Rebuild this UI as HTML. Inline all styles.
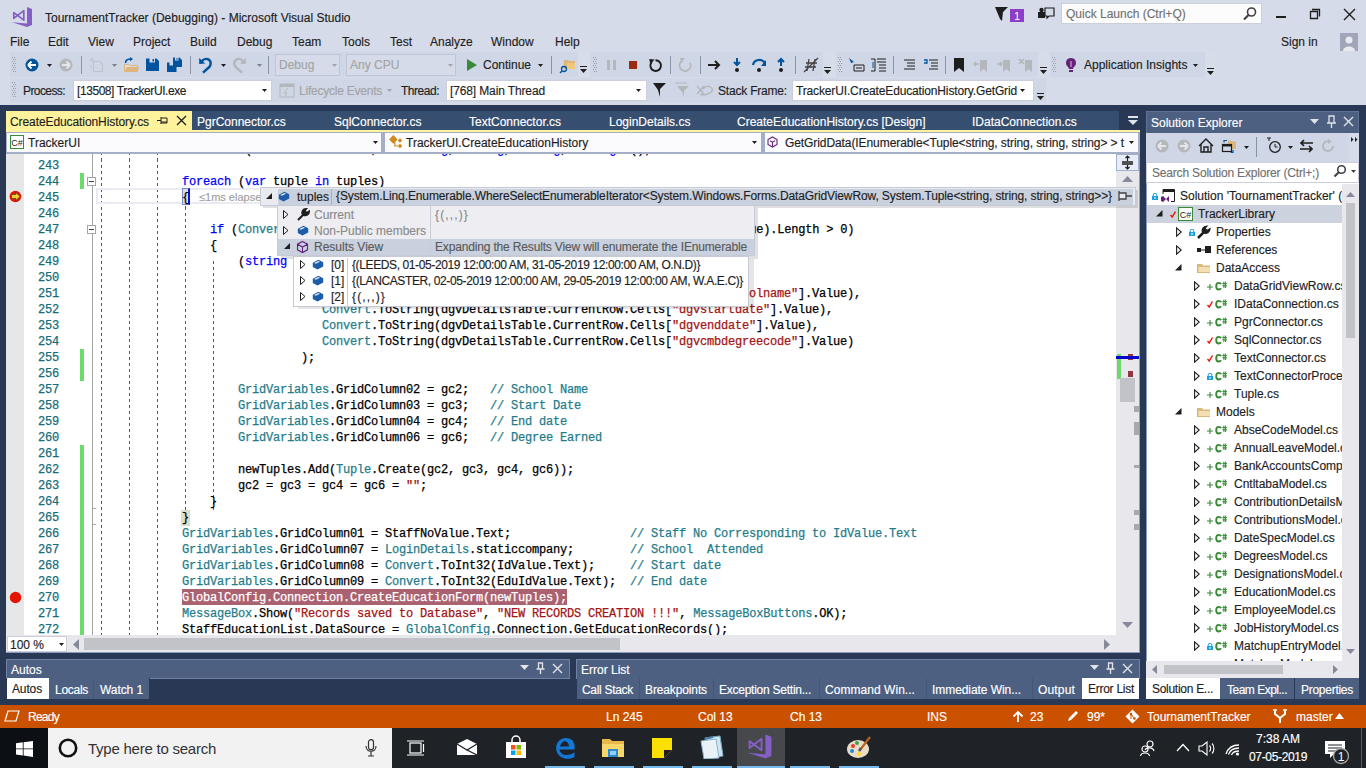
<!DOCTYPE html><html><head><meta charset="utf-8"><style>
*{margin:0;padding:0;box-sizing:border-box}
html,body{width:1366px;height:768px;overflow:hidden;background:#d6dbe9;font-family:'Liberation Sans',sans-serif;font-size:12px}
.r{position:absolute}
.t{position:absolute;white-space:pre;line-height:13px;-webkit-text-stroke:0.15px currentColor}
.code{position:absolute;white-space:pre;font-family:'Liberation Mono',monospace;font-size:12px;letter-spacing:-0.2px;line-height:16px;color:#000;-webkit-text-stroke:0.25px currentColor}
.kw{color:#0000ff}.ty{color:#1f7d8a}.st{color:#a31515}.cm{color:#008000}
</style></head><body><div class="r" style="left:0px;top:0px;width:1366px;height:105px;background:#d6dbe9;"></div>
<svg class="r" style="left:0px;top:0px;" width="40" height="32" viewBox="0 0 40 32"><path d="M27 7 L32 9 V25 L27 27 Z M12 22.2 L27 23.6 L27 27 Z" fill="#865fc5"/><path d="M13.8 12.6 L17.6 15.4 L13.8 18.4 Z M23.8 10.6 V20.2 L17.6 15.4 Z" fill="none" stroke="#865fc5" stroke-width="1.7" stroke-linejoin="round"/></svg>
<div class="t" style="left:45px;top:12px;color:#1e1e1e;font-size:12px;font-family:'Liberation Sans';">TournamentTracker (Debugging) - Microsoft Visual Studio</div>
<svg class="r" style="left:994px;top:5px;" width="32" height="20" viewBox="0 0 32 20"><path d="M1 2 H14 L9 7 L8 16 L6 14 Z" fill="#1e1e1e"/><rect x="16" y="4" width="14" height="13" fill="#8c3ec9"/><text x="23" y="15" font-size="11" fill="#fff" text-anchor="middle" font-family="Liberation Sans">1</text></svg>
<svg class="r" style="left:1036px;top:6px;" width="20" height="18" viewBox="0 0 20 18"><rect x="2" y="6" width="7" height="6" fill="#1e1e1e"/><circle cx="5.5" cy="4" r="2.2" fill="#1e1e1e"/><path d="M9 2 H18 V10 H13 L11 12 V10 H9 Z" fill="none" stroke="#1e1e1e" stroke-width="1.2"/></svg>
<div class="r" style="left:1061px;top:3px;width:201px;height:21px;background:#fcfcfc;border:1px solid #cccedb"></div>
<div class="t" style="left:1066px;top:8px;color:#717171;font-size:12px;font-family:'Liberation Sans';">Quick Launch (Ctrl+Q)</div>
<svg class="r" style="left:1242px;top:6px;" width="16" height="16" viewBox="0 0 16 16"><circle cx="9.5" cy="6" r="4" fill="none" stroke="#424242" stroke-width="1.6"/><path d="M7 8.5 L2 13.5" stroke="#424242" stroke-width="2.2"/></svg>
<div class="r" style="left:1276px;top:16px;width:10px;height:2px;background:#1e1e1e;"></div>
<svg class="r" style="left:1309px;top:8px;" width="12" height="12" viewBox="0 0 12 12"><path d="M3 1.5 H10.5 V8.5 M1.5 3.5 H8.5 V10.5 H1.5 Z" fill="none" stroke="#1e1e1e" stroke-width="1.3"/></svg>
<svg class="r" style="left:1343px;top:8px;" width="13" height="13" viewBox="0 0 13 13"><path d="M1 1 L12 12 M12 1 L1 12" stroke="#1e1e1e" stroke-width="1.4"/></svg>
<div class="t" style="left:10px;top:36px;color:#1e1e1e;font-size:12px;font-family:'Liberation Sans';">File</div>
<div class="t" style="left:48px;top:36px;color:#1e1e1e;font-size:12px;font-family:'Liberation Sans';">Edit</div>
<div class="t" style="left:88px;top:36px;color:#1e1e1e;font-size:12px;font-family:'Liberation Sans';">View</div>
<div class="t" style="left:133px;top:36px;color:#1e1e1e;font-size:12px;font-family:'Liberation Sans';">Project</div>
<div class="t" style="left:190px;top:36px;color:#1e1e1e;font-size:12px;font-family:'Liberation Sans';">Build</div>
<div class="t" style="left:237px;top:36px;color:#1e1e1e;font-size:12px;font-family:'Liberation Sans';">Debug</div>
<div class="t" style="left:292px;top:36px;color:#1e1e1e;font-size:12px;font-family:'Liberation Sans';">Team</div>
<div class="t" style="left:342px;top:36px;color:#1e1e1e;font-size:12px;font-family:'Liberation Sans';">Tools</div>
<div class="t" style="left:390px;top:36px;color:#1e1e1e;font-size:12px;font-family:'Liberation Sans';">Test</div>
<div class="t" style="left:430px;top:36px;color:#1e1e1e;font-size:12px;font-family:'Liberation Sans';">Analyze</div>
<div class="t" style="left:491px;top:36px;color:#1e1e1e;font-size:12px;font-family:'Liberation Sans';">Window</div>
<div class="t" style="left:555px;top:36px;color:#1e1e1e;font-size:12px;font-family:'Liberation Sans';">Help</div>
<div class="t" style="left:1281px;top:36px;color:#1e1e1e;font-size:12px;font-family:'Liberation Sans';">Sign in</div>
<svg class="r" style="left:1340px;top:33px;" width="18" height="18" viewBox="0 0 18 18"><rect x="0" y="0" width="18" height="18" fill="#a0a6b8"/><circle cx="9" cy="7" r="3.5" fill="#e8eaf0"/><path d="M3 18 C3 12 15 12 15 18 Z" fill="#e8eaf0"/></svg>
<div class="r" style="left:10px;top:52px;width:568px;height:25px;background:#cfd6e5;"></div>
<div class="r" style="left:578px;top:52px;width:12px;height:25px;background:#d6dde9;"></div>
<div class="r" style="left:590px;top:52px;width:233px;height:25px;background:#cfd6e5;"></div>
<div class="r" style="left:823px;top:52px;width:13px;height:25px;background:#d6dde9;"></div>
<div class="r" style="left:836px;top:52px;width:202px;height:25px;background:#cfd6e5;"></div>
<div class="r" style="left:1038px;top:52px;width:12px;height:25px;background:#d6dde9;"></div>
<div class="r" style="left:1050px;top:52px;width:155px;height:25px;background:#cfd6e5;"></div>
<div class="r" style="left:1205px;top:52px;width:10px;height:25px;background:#d6dde9;"></div>
<svg class="r" style="left:12px;top:57px;" width="4" height="16" viewBox="0 0 4 16"><rect x="0" y="0" width="1" height="1" fill="#999ea8"/><rect x="2" y="0" width="1" height="1" fill="#999ea8"/><rect x="1" y="2" width="1" height="1" fill="#999ea8"/><rect x="3" y="2" width="1" height="1" fill="#999ea8"/><rect x="0" y="4" width="1" height="1" fill="#999ea8"/><rect x="2" y="4" width="1" height="1" fill="#999ea8"/><rect x="1" y="6" width="1" height="1" fill="#999ea8"/><rect x="3" y="6" width="1" height="1" fill="#999ea8"/><rect x="0" y="8" width="1" height="1" fill="#999ea8"/><rect x="2" y="8" width="1" height="1" fill="#999ea8"/><rect x="1" y="10" width="1" height="1" fill="#999ea8"/><rect x="3" y="10" width="1" height="1" fill="#999ea8"/><rect x="0" y="12" width="1" height="1" fill="#999ea8"/><rect x="2" y="12" width="1" height="1" fill="#999ea8"/><rect x="1" y="14" width="1" height="1" fill="#999ea8"/><rect x="3" y="14" width="1" height="1" fill="#999ea8"/></svg>
<svg class="r" style="left:25px;top:58px;" width="14" height="14" viewBox="0 0 14 14"><circle cx="7" cy="7" r="6.5" fill="#00539c"/><path d="M3 7 H11 M3 7 L6.5 3.5 M3 7 L6.5 10.5" stroke="#fff" stroke-width="1.8" fill="none"/></svg>
<svg class="r" style="left:47px;top:64px;" width="5" height="3" viewBox="0 0 5 3"><path d="M0 0 H5 L2.5 3 Z" fill="#1e1e1e"/></svg>
<svg class="r" style="left:59px;top:58px;" width="14" height="14" viewBox="0 0 14 14"><circle cx="7" cy="7" r="6.5" fill="#b4b7bc"/><path d="M11 7 H3 M11 7 L7.5 3.5 M11 7 L7.5 10.5" stroke="#e6e7ea" stroke-width="1.8" fill="none"/></svg>
<div class="r" style="left:81px;top:56px;width:1px;height:18px;background:#8a93a6;"></div>
<svg class="r" style="left:89px;top:57px;" width="16" height="16" viewBox="0 0 16 16"><path d="M4.5 4.5 H11 L13.5 7 V14.5 H4.5 Z" fill="none" stroke="#c0c3c9" stroke-width="1.2"/><path d="M2 8 V11.5 M3 1 L3 5 M1 3 H5 M1.5 1.5 L4.5 4.5 M4.5 1.5 L1.5 4.5" stroke="#c0c3c9" stroke-width="0.9"/></svg>
<svg class="r" style="left:112px;top:64px;" width="5" height="3" viewBox="0 0 5 3"><path d="M0 0 H5 L2.5 3 Z" fill="#7e8289"/></svg>
<svg class="r" style="left:123px;top:57px;" width="17" height="16" viewBox="0 0 17 16"><path d="M1.5 7.5 H6 L7 8.5 H14.5 V14.5 H1.5 Z" fill="#dcdde3" stroke="#dcb67a"/><path d="M1 15 L4 10 H16 L14.5 15 Z" fill="#dcb67a"/><path d="M2.5 6 C2.5 3 4.5 2 8 2" fill="none" stroke="#00539c" stroke-width="1.6"/><path d="M7 0 L10 2 L7 4.2 Z" fill="#00539c"/></svg>
<svg class="r" style="left:146px;top:58px;" width="13" height="13" viewBox="0 0 13 13"><path d="M0 0.5 H3.5 V4.5 H9 V0.5 H10.5 L13 3 V13 H0 Z" fill="#00539c"/><rect x="6.5" y="1" width="1.5" height="2.5" fill="#00539c"/></svg>
<svg class="r" style="left:167px;top:57px;" width="16" height="15" viewBox="0 0 16 15"><path d="M6 0.5 H8 V3.5 H11.5 V0.5 H12.5 L15 3 V10 H6 Z" fill="#00539c"/><path d="M0 5.5 H2.5 V8.5 H6 V5.5 H7 L9.5 8 V15 H0 Z" fill="#00539c"/><rect x="9.5" y="1" width="1" height="1.8" fill="#00539c"/></svg>
<div class="r" style="left:190px;top:56px;width:1px;height:18px;background:#8a93a6;"></div>
<svg class="r" style="left:195px;top:55px;" width="20" height="20" viewBox="0 0 20 20"><path d="M4.2 3 L4.2 9 L10.2 8.6 Z" fill="#00539c"/><path d="M6.3 6.8 C8.3 4 11.5 3.3 13.8 4.6 C16.3 6.2 16.3 9.8 14 12.3 L8 17.6" fill="none" stroke="#00539c" stroke-width="2.5"/></svg>
<svg class="r" style="left:221px;top:64px;" width="5" height="3" viewBox="0 0 5 3"><path d="M0 0 H5 L2.5 3 Z" fill="#1e1e1e"/></svg>
<svg class="r" style="left:230px;top:55px;" width="20" height="20" viewBox="0 0 20 20"><path d="M15.8 3 L15.8 9 L9.8 8.6 Z" fill="#b4b7bc"/><path d="M13.7 6.8 C11.7 4 8.5 3.3 6.2 4.6 C3.7 6.2 3.7 9.8 6 12.3 L12 17.6" fill="none" stroke="#b4b7bc" stroke-width="2.5"/></svg>
<svg class="r" style="left:257px;top:64px;" width="5" height="3" viewBox="0 0 5 3"><path d="M0 0 H5 L2.5 3 Z" fill="#7e8289"/></svg>
<div class="r" style="left:268px;top:56px;width:1px;height:18px;background:#8a93a6;"></div>
<div class="r" style="left:275px;top:54px;width:65px;height:22px;background:#d6dbe9;border:1px solid #bec6d8"></div>
<div class="t" style="left:279px;top:59px;color:#a2a4a5;font-size:12px;font-family:'Liberation Sans';">Debug</div>
<svg class="r" style="left:332px;top:64px;" width="5" height="3" viewBox="0 0 5 3"><path d="M0 0 H5 L2.5 3 Z" fill="#a2a4a5"/></svg>
<div class="r" style="left:346px;top:54px;width:110px;height:22px;background:#d6dbe9;border:1px solid #bec6d8"></div>
<div class="t" style="left:350px;top:59px;color:#a2a4a5;font-size:12px;font-family:'Liberation Sans';">Any CPU</div>
<svg class="r" style="left:448px;top:64px;" width="5" height="3" viewBox="0 0 5 3"><path d="M0 0 H5 L2.5 3 Z" fill="#a2a4a5"/></svg>
<svg class="r" style="left:466px;top:58px;" width="12" height="14" viewBox="0 0 12 14"><path d="M1 1 L11 7 L1 13 Z" fill="#388a34"/></svg>
<div class="t" style="left:483px;top:59px;color:#1e1e1e;font-size:12px;font-family:'Liberation Sans';">Continue</div>
<svg class="r" style="left:538px;top:64px;" width="5" height="3" viewBox="0 0 5 3"><path d="M0 0 H5 L2.5 3 Z" fill="#1e1e1e"/></svg>
<div class="r" style="left:551px;top:56px;width:1px;height:18px;background:#8a93a6;"></div>
<svg class="r" style="left:559px;top:57px;" width="17" height="17" viewBox="0 0 17 17"><path d="M5 3 H9 L10 4 H16 V12 H5 Z" fill="#dcb67a"/><path d="M8 6 H16 V12 H8 Z" fill="#f3c77a"/><circle cx="5" cy="12" r="2.5" fill="none" stroke="#00539c" stroke-width="1.3"/><path d="M3 14 L1 16" stroke="#00539c" stroke-width="1.5"/></svg>
<svg class="r" style="left:580px;top:64px;" width="8" height="10" viewBox="0 0 8 10"><rect x="0" y="2" width="7" height="1" fill="#1e1e1e"/><path d="M0 5 H7 L3.5 9 Z" fill="#1e1e1e"/></svg>
<svg class="r" style="left:593px;top:57px;" width="4" height="16" viewBox="0 0 4 16"><rect x="0" y="0" width="1" height="1" fill="#999ea8"/><rect x="2" y="0" width="1" height="1" fill="#999ea8"/><rect x="1" y="2" width="1" height="1" fill="#999ea8"/><rect x="3" y="2" width="1" height="1" fill="#999ea8"/><rect x="0" y="4" width="1" height="1" fill="#999ea8"/><rect x="2" y="4" width="1" height="1" fill="#999ea8"/><rect x="1" y="6" width="1" height="1" fill="#999ea8"/><rect x="3" y="6" width="1" height="1" fill="#999ea8"/><rect x="0" y="8" width="1" height="1" fill="#999ea8"/><rect x="2" y="8" width="1" height="1" fill="#999ea8"/><rect x="1" y="10" width="1" height="1" fill="#999ea8"/><rect x="3" y="10" width="1" height="1" fill="#999ea8"/><rect x="0" y="12" width="1" height="1" fill="#999ea8"/><rect x="2" y="12" width="1" height="1" fill="#999ea8"/><rect x="1" y="14" width="1" height="1" fill="#999ea8"/><rect x="3" y="14" width="1" height="1" fill="#999ea8"/></svg>
<svg class="r" style="left:606px;top:58px;" width="12" height="14" viewBox="0 0 12 14"><rect x="1" y="2" width="3" height="10" fill="#b4b7bc"/><rect x="7" y="2" width="3" height="10" fill="#b4b7bc"/></svg>
<div class="r" style="left:629px;top:61px;width:8px;height:8px;background:#9b2a10;"></div>
<svg class="r" style="left:647px;top:57px;" width="16" height="16" viewBox="0 0 16 16"><path d="M4.6 5.2 A5.3 5.3 0 1 0 8.5 3.3" fill="none" stroke="#1e1e1e" stroke-width="1.9"/><path d="M2.2 2 L7.6 2.6 L3.4 7.4 Z" fill="#1e1e1e"/></svg>
<div class="r" style="left:670px;top:56px;width:1px;height:18px;background:#8a93a6;"></div>
<svg class="r" style="left:678px;top:57px;" width="15" height="15" viewBox="0 0 15 15"><path d="M4 4 A5.5 5.5 0 1 0 12 6" fill="none" stroke="#b4b7bc" stroke-width="1.8"/><path d="M2 1 H7 L3 6 Z" fill="#b4b7bc"/></svg>
<div class="r" style="left:700px;top:56px;width:1px;height:18px;background:#8a93a6;"></div>
<svg class="r" style="left:707px;top:58px;" width="15" height="14" viewBox="0 0 15 14"><path d="M1 7 H12 M8 3 L12 7 L8 11" fill="none" stroke="#1e1e1e" stroke-width="2"/></svg>
<svg class="r" style="left:731px;top:57px;" width="12" height="16" viewBox="0 0 12 16"><path d="M6 1 V8 M3 5 L6 8 L9 5" fill="none" stroke="#00539c" stroke-width="2"/><circle cx="6" cy="13" r="2" fill="#1e1e1e"/></svg>
<svg class="r" style="left:751px;top:57px;" width="17" height="16" viewBox="0 0 17 16"><path d="M2 8 C3 2 12 1 14 7" fill="none" stroke="#00539c" stroke-width="2.2"/><path d="M15 3 V9 H10 Z" fill="#00539c"/><circle cx="8" cy="13" r="2" fill="#1e1e1e"/></svg>
<svg class="r" style="left:775px;top:57px;" width="12" height="16" viewBox="0 0 12 16"><path d="M6 9 V2 M3 5 L6 2 L9 5" fill="none" stroke="#00539c" stroke-width="2"/><circle cx="6" cy="13" r="2" fill="#1e1e1e"/></svg>
<div class="r" style="left:795px;top:56px;width:1px;height:18px;background:#8a93a6;"></div>
<svg class="r" style="left:803px;top:57px;" width="16" height="16" viewBox="0 0 16 16"><path d="M3 6 H14 M2 10 H13 M6 2 L4 14 M12 2 L10 14 M1 15 L15 1" stroke="#424242" stroke-width="1.3" fill="none"/></svg>
<svg class="r" style="left:824px;top:65px;" width="8" height="10" viewBox="0 0 8 10"><rect x="0" y="2" width="7" height="1" fill="#1e1e1e"/><path d="M0 5 H7 L3.5 9 Z" fill="#1e1e1e"/></svg>
<svg class="r" style="left:838px;top:57px;" width="4" height="16" viewBox="0 0 4 16"><rect x="0" y="0" width="1" height="1" fill="#999ea8"/><rect x="2" y="0" width="1" height="1" fill="#999ea8"/><rect x="1" y="2" width="1" height="1" fill="#999ea8"/><rect x="3" y="2" width="1" height="1" fill="#999ea8"/><rect x="0" y="4" width="1" height="1" fill="#999ea8"/><rect x="2" y="4" width="1" height="1" fill="#999ea8"/><rect x="1" y="6" width="1" height="1" fill="#999ea8"/><rect x="3" y="6" width="1" height="1" fill="#999ea8"/><rect x="0" y="8" width="1" height="1" fill="#999ea8"/><rect x="2" y="8" width="1" height="1" fill="#999ea8"/><rect x="1" y="10" width="1" height="1" fill="#999ea8"/><rect x="3" y="10" width="1" height="1" fill="#999ea8"/><rect x="0" y="12" width="1" height="1" fill="#999ea8"/><rect x="2" y="12" width="1" height="1" fill="#999ea8"/><rect x="1" y="14" width="1" height="1" fill="#999ea8"/><rect x="3" y="14" width="1" height="1" fill="#999ea8"/></svg>
<svg class="r" style="left:848px;top:57px;" width="17" height="16" viewBox="0 0 17 16"><path d="M1 1 L6 5 L3 6 Z" fill="#00539c"/><path d="M6 8 H16 V14 H6 Z M8 11 H14" stroke="#1e1e1e" fill="none"/></svg>
<svg class="r" style="left:870px;top:57px;" width="17" height="16" viewBox="0 0 17 16"><path d="M1 2 H5 V14 H1 M7 2 H16 M7 5 H16 M9 8 H16 M9 11 H16 M9 14 H16" stroke="#1e1e1e" fill="none"/><path d="M3 5 V11" stroke="#00539c"/></svg>
<div class="r" style="left:893px;top:56px;width:1px;height:18px;background:#8a93a6;"></div>
<svg class="r" style="left:901px;top:58px;" width="15" height="14" viewBox="0 0 15 14"><path d="M3 2 H14 M6 5 H14 M6 8 H14 M3 11 H14" stroke="#1e1e1e" fill="none"/></svg>
<svg class="r" style="left:923px;top:58px;" width="16" height="14" viewBox="0 0 16 14"><path d="M6 2 H15 M8 5 H15 M8 8 H15 M6 11 H15" stroke="#1e1e1e" fill="none"/><path d="M1 2 H4 V5 H1" stroke="#00539c" fill="none" stroke-width="1.3"/></svg>
<div class="r" style="left:945px;top:56px;width:1px;height:18px;background:#8a93a6;"></div>
<svg class="r" style="left:952px;top:57px;" width="14" height="16" viewBox="0 0 14 16"><path d="M2 1 H12 V15 L7 11 L2 15 Z" fill="#1e1e1e"/></svg>
<svg class="r" style="left:973px;top:57px;" width="16" height="16" viewBox="0 0 16 16"><path d="M7 3 H14 V15 L10.5 12 L7 15 Z" fill="#b4b7bc"/><path d="M1 7 H6 M3 5 L1 7 L3 9" stroke="#b4b7bc" fill="none" stroke-width="1.5"/></svg>
<svg class="r" style="left:996px;top:57px;" width="16" height="16" viewBox="0 0 16 16"><path d="M7 3 H14 V15 L10.5 12 L7 15 Z" fill="#b4b7bc"/><path d="M1 7 H6 M4 5 L6 7 L4 9" stroke="#b4b7bc" fill="none" stroke-width="1.5"/></svg>
<svg class="r" style="left:1018px;top:57px;" width="16" height="16" viewBox="0 0 16 16"><path d="M7 3 H14 V15 L10.5 12 L7 15 Z" fill="#b4b7bc"/><path d="M1 2 L6 7 M6 2 L1 7" stroke="#b4b7bc" stroke-width="1.5"/></svg>
<svg class="r" style="left:1040px;top:65px;" width="8" height="10" viewBox="0 0 8 10"><rect x="0" y="2" width="7" height="1" fill="#1e1e1e"/><path d="M0 5 H7 L3.5 9 Z" fill="#1e1e1e"/></svg>
<svg class="r" style="left:1052px;top:57px;" width="4" height="16" viewBox="0 0 4 16"><rect x="0" y="0" width="1" height="1" fill="#999ea8"/><rect x="2" y="0" width="1" height="1" fill="#999ea8"/><rect x="1" y="2" width="1" height="1" fill="#999ea8"/><rect x="3" y="2" width="1" height="1" fill="#999ea8"/><rect x="0" y="4" width="1" height="1" fill="#999ea8"/><rect x="2" y="4" width="1" height="1" fill="#999ea8"/><rect x="1" y="6" width="1" height="1" fill="#999ea8"/><rect x="3" y="6" width="1" height="1" fill="#999ea8"/><rect x="0" y="8" width="1" height="1" fill="#999ea8"/><rect x="2" y="8" width="1" height="1" fill="#999ea8"/><rect x="1" y="10" width="1" height="1" fill="#999ea8"/><rect x="3" y="10" width="1" height="1" fill="#999ea8"/><rect x="0" y="12" width="1" height="1" fill="#999ea8"/><rect x="2" y="12" width="1" height="1" fill="#999ea8"/><rect x="1" y="14" width="1" height="1" fill="#999ea8"/><rect x="3" y="14" width="1" height="1" fill="#999ea8"/></svg>
<svg class="r" style="left:1065px;top:57px;" width="12" height="16" viewBox="0 0 12 16"><path d="M6 1 C2 1 1 4 1 6 C1 9 4 10 4 12 H8 C8 10 11 9 11 6 C11 4 10 1 6 1 Z" fill="#68217a"/><rect x="4" y="13" width="4" height="2" fill="#68217a"/><path d="M6 4 V10" stroke="#d6c8e0" stroke-width="1"/></svg>
<div class="t" style="left:1084px;top:59px;color:#1e1e1e;font-size:12px;font-family:'Liberation Sans';">Application Insights</div>
<svg class="r" style="left:1193px;top:64px;" width="5" height="3" viewBox="0 0 5 3"><path d="M0 0 H5 L2.5 3 Z" fill="#1e1e1e"/></svg>
<svg class="r" style="left:1207px;top:66px;" width="8" height="10" viewBox="0 0 8 10"><rect x="0" y="2" width="7" height="1" fill="#1e1e1e"/><path d="M0 5 H7 L3.5 9 Z" fill="#1e1e1e"/></svg>
<div class="r" style="left:10px;top:78px;width:1036px;height:24px;background:#cfd6e5;"></div>
<svg class="r" style="left:12px;top:82px;" width="4" height="16" viewBox="0 0 4 16"><rect x="0" y="0" width="1" height="1" fill="#999ea8"/><rect x="2" y="0" width="1" height="1" fill="#999ea8"/><rect x="1" y="2" width="1" height="1" fill="#999ea8"/><rect x="3" y="2" width="1" height="1" fill="#999ea8"/><rect x="0" y="4" width="1" height="1" fill="#999ea8"/><rect x="2" y="4" width="1" height="1" fill="#999ea8"/><rect x="1" y="6" width="1" height="1" fill="#999ea8"/><rect x="3" y="6" width="1" height="1" fill="#999ea8"/><rect x="0" y="8" width="1" height="1" fill="#999ea8"/><rect x="2" y="8" width="1" height="1" fill="#999ea8"/><rect x="1" y="10" width="1" height="1" fill="#999ea8"/><rect x="3" y="10" width="1" height="1" fill="#999ea8"/><rect x="0" y="12" width="1" height="1" fill="#999ea8"/><rect x="2" y="12" width="1" height="1" fill="#999ea8"/><rect x="1" y="14" width="1" height="1" fill="#999ea8"/><rect x="3" y="14" width="1" height="1" fill="#999ea8"/></svg>
<div class="t" style="left:23px;top:85px;color:#1e1e1e;font-size:12px;font-family:'Liberation Sans';letter-spacing:-0.586px;">Process:</div>
<div class="r" style="left:73px;top:80px;width:199px;height:21px;background:#ffffff;border:1px solid #cccedb"></div>
<div class="t" style="left:77px;top:85px;color:#1e1e1e;font-size:12px;font-family:'Liberation Sans';letter-spacing:-0.432px;">[13508] TrackerUI.exe</div>
<svg class="r" style="left:262px;top:89px;" width="5" height="3" viewBox="0 0 5 3"><path d="M0 0 H5 L2.5 3 Z" fill="#1e1e1e"/></svg>
<svg class="r" style="left:279px;top:83px;" width="16" height="15" viewBox="0 0 16 15"><rect x="1" y="1" width="14" height="13" fill="none" stroke="#b4b7bc"/><rect x="1" y="1" width="14" height="3" fill="#b4b7bc"/><path d="M9 5 L5 10 H8 L6 13" stroke="#b4b7bc" fill="none"/></svg>
<div class="t" style="left:299px;top:85px;color:#a2a4a5;font-size:12px;font-family:'Liberation Sans';letter-spacing:-0.232px;">Lifecycle Events</div>
<svg class="r" style="left:387px;top:89px;" width="5" height="3" viewBox="0 0 5 3"><path d="M0 0 H5 L2.5 3 Z" fill="#a2a4a5"/></svg>
<div class="t" style="left:401px;top:85px;color:#1e1e1e;font-size:12px;font-family:'Liberation Sans';letter-spacing:-0.480px;">Thread:</div>
<div class="r" style="left:446px;top:80px;width:201px;height:21px;background:#ffffff;border:1px solid #cccedb"></div>
<div class="t" style="left:450px;top:85px;color:#1e1e1e;font-size:12px;font-family:'Liberation Sans';letter-spacing:-0.128px;">[768] Main Thread</div>
<svg class="r" style="left:636px;top:89px;" width="5" height="3" viewBox="0 0 5 3"><path d="M0 0 H5 L2.5 3 Z" fill="#1e1e1e"/></svg>
<svg class="r" style="left:652px;top:82px;" width="15" height="16" viewBox="0 0 15 16"><path d="M1 1 H14 L8 7 V15 L6 8 Z" fill="#1e1e1e"/></svg>
<svg class="r" style="left:674px;top:82px;" width="16" height="16" viewBox="0 0 16 16"><path d="M3 4 H15 L10 9 V15 L8 10 Z" fill="#b4b7bc"/><path d="M1 1 H13" stroke="#b4b7bc"/></svg>
<svg class="r" style="left:696px;top:82px;" width="18" height="16" viewBox="0 0 18 16"><path d="M1 4 L8 12 M8 4 L1 12 M7 7 C10 3 14 3 17 8 M4 12 C8 14 14 12 17 8" stroke="#b4b7bc" fill="none" stroke-width="1.4"/></svg>
<div class="t" style="left:718px;top:85px;color:#1e1e1e;font-size:12px;font-family:'Liberation Sans';letter-spacing:-0.197px;">Stack Frame:</div>
<div class="r" style="left:792px;top:80px;width:242px;height:21px;background:#ffffff;border:1px solid #cccedb"></div>
<div class="t" style="left:796px;top:85px;color:#1e1e1e;font-size:12px;font-family:'Liberation Sans';letter-spacing:-0.144px;">TrackerUI.CreateEducationHistory.GetGrid</div>
<svg class="r" style="left:1020px;top:89px;" width="5" height="3" viewBox="0 0 5 3"><path d="M0 0 H5 L2.5 3 Z" fill="#1e1e1e"/></svg>
<svg class="r" style="left:1037px;top:91px;" width="8" height="10" viewBox="0 0 8 10"><rect x="0" y="2" width="7" height="1" fill="#1e1e1e"/><path d="M0 5 H7 L3.5 9 Z" fill="#1e1e1e"/></svg>
<div class="r" style="left:0px;top:105px;width:1366px;height:600px;background:#293955;"></div>
<div class="r" style="left:192px;top:111px;width:927px;height:19px;background:#364e6f;"></div>
<div class="r" style="left:6px;top:111px;width:186px;height:19px;background:#fff29d;"></div>
<div class="t" style="left:10px;top:116px;color:#1e1e1e;font-size:12px;font-family:'Liberation Sans';letter-spacing:-0.087px;">CreateEducationHistory.cs</div>
<svg class="r" style="left:156px;top:115px;" width="13" height="11" viewBox="0 0 13 11"><path d="M1 5.5 H5 M5 2 V9 M5 3 H11 V8 H5 M5 7 H11" stroke="#1e1e1e" fill="none"/></svg>
<svg class="r" style="left:176px;top:115px;" width="11" height="11" viewBox="0 0 11 11"><path d="M1 1 L10 10 M10 1 L1 10" stroke="#1e1e1e" stroke-width="1.3"/></svg>
<div class="t" style="left:197px;top:116px;color:#ffffff;font-size:12px;font-family:'Liberation Sans';">PgrConnector.cs</div>
<div class="t" style="left:334px;top:116px;color:#ffffff;font-size:12px;font-family:'Liberation Sans';">SqlConnector.cs</div>
<div class="t" style="left:469px;top:116px;color:#ffffff;font-size:12px;font-family:'Liberation Sans';">TextConnector.cs</div>
<div class="t" style="left:609px;top:116px;color:#ffffff;font-size:12px;font-family:'Liberation Sans';">LoginDetails.cs</div>
<div class="t" style="left:737px;top:116px;color:#ffffff;font-size:12px;font-family:'Liberation Sans';">CreateEducationHistory.cs [Design]</div>
<div class="t" style="left:972px;top:116px;color:#ffffff;font-size:12px;font-family:'Liberation Sans';">IDataConnection.cs</div>
<svg class="r" style="left:1127px;top:116px;" width="12" height="10" viewBox="0 0 12 10"><rect x="1" y="0" width="10" height="2" fill="#e0e3e8"/><path d="M1 4 H11 L6 9 Z" fill="#e0e3e8"/></svg>
<div class="r" style="left:6px;top:130px;width:1134px;height:2px;background:#fff29d;"></div>
<div class="r" style="left:6px;top:132px;width:1134px;height:22px;background:#a4aec6;"></div>
<div class="r" style="left:7px;top:133px;width:1131px;height:19px;background:#fbfbfd;"></div>
<div class="r" style="left:381px;top:133px;width:4px;height:19px;background:#a4aec6;"></div>
<div class="r" style="left:761px;top:133px;width:4px;height:19px;background:#a4aec6;"></div>
<svg class="r" style="left:10px;top:135px;" width="14" height="14" viewBox="0 0 14 14"><rect x="0.5" y="0.5" width="13" height="13" fill="#fff" stroke="#388a34"/><text x="7" y="11" font-size="9" text-anchor="middle" fill="#1e1e1e" font-family="Liberation Sans">C#</text></svg>
<div class="t" style="left:28px;top:137px;color:#1e1e1e;font-size:12px;font-family:'Liberation Sans';">TrackerUI</div>
<svg class="r" style="left:373px;top:141px;" width="5" height="3" viewBox="0 0 5 3"><path d="M0 0 H5 L2.5 3 Z" fill="#1e1e1e"/></svg>
<svg class="r" style="left:385px;top:132px;" width="20" height="20" viewBox="0 0 20 20"><path d="M4 7.4 L8.3 3 L12.6 7.4 L8.3 11.8 Z M12.7 8.5 L15 6.2 L17.3 8.5 L15 10.8 Z M12.7 14 L15 11.7 L17.3 14 L15 16.3 Z" fill="#d28a1e"/><path d="M9.8 9.5 V14 H13" stroke="#d28a1e" stroke-width="1.2" fill="none"/></svg>
<div class="t" style="left:406px;top:137px;color:#1e1e1e;font-size:12px;font-family:'Liberation Sans';">TrackerUI.CreateEducationHistory</div>
<svg class="r" style="left:752px;top:141px;" width="5" height="3" viewBox="0 0 5 3"><path d="M0 0 H5 L2.5 3 Z" fill="#1e1e1e"/></svg>
<svg class="r" style="left:767px;top:136px;" width="11" height="12" viewBox="0 0 11 12"><path d="M5.5 1 L10 3.5 V8.5 L5.5 11 L1 8.5 V3.5 Z M3 4.8 L5.5 6.2 L8 4.8 M5.5 6.2 V11" fill="none" stroke="#68217a" stroke-width="1.1"/></svg>
<div class="t" style="left:785px;top:137px;color:#1e1e1e;font-size:12px;font-family:'Liberation Sans';letter-spacing:-0.083px;">GetGridData(IEnumerable&lt;Tuple&lt;string, string, string, string&gt; &gt; t</div>
<div class="r" style="left:1126px;top:133px;width:12px;height:19px;background:#fbfbfd;"></div>
<svg class="r" style="left:1129px;top:141px;" width="5" height="3" viewBox="0 0 5 3"><path d="M0 0 H5 L2.5 3 Z" fill="#1e1e1e"/></svg>
<div class="r" style="left:6px;top:154px;width:1134px;height:481px;background:#ffffff;"></div>
<div class="r" style="left:6px;top:154px;width:18px;height:481px;background:#e6e7e8;"></div>
<div class="r" style="left:92px;top:154px;width:1px;height:481px;background:#a5a5a5;"></div>
<div class="r" style="left:101px;top:154px;width:1px;height:481px;background:repeating-linear-gradient(#5a5a5a 0 3px,transparent 3px 6px);background-position:0 5px"></div>
<div class="r" style="left:129px;top:154px;width:1px;height:481px;background:repeating-linear-gradient(#5a5a5a 0 3px,transparent 3px 6px);background-position:0 5px"></div>
<div class="r" style="left:157px;top:154px;width:1px;height:481px;background:repeating-linear-gradient(#5a5a5a 0 3px,transparent 3px 6px);background-position:0 5px"></div>
<div class="r" style="left:185px;top:206px;width:1px;height:320px;background:repeating-linear-gradient(#5a5a5a 0 3px,transparent 3px 6px);background-position:0 1px"></div>
<div class="r" style="left:213px;top:258px;width:1px;height:252px;background:repeating-linear-gradient(#5a5a5a 0 3px,transparent 3px 6px);background-position:0 3px"></div>
<div class="code" style="left:34px;top:158px;width:25px;text-align:right;color:#156e7a">243</div>
<div class="code" style="left:34px;top:174px;width:25px;text-align:right;color:#156e7a">244</div>
<div class="code" style="left:34px;top:190px;width:25px;text-align:right;color:#156e7a">245</div>
<div class="code" style="left:34px;top:206px;width:25px;text-align:right;color:#156e7a">246</div>
<div class="code" style="left:34px;top:222px;width:25px;text-align:right;color:#156e7a">247</div>
<div class="code" style="left:34px;top:238px;width:25px;text-align:right;color:#156e7a">248</div>
<div class="code" style="left:34px;top:254px;width:25px;text-align:right;color:#156e7a">249</div>
<div class="code" style="left:34px;top:270px;width:25px;text-align:right;color:#156e7a">250</div>
<div class="code" style="left:34px;top:286px;width:25px;text-align:right;color:#156e7a">251</div>
<div class="code" style="left:34px;top:302px;width:25px;text-align:right;color:#156e7a">252</div>
<div class="code" style="left:34px;top:318px;width:25px;text-align:right;color:#156e7a">253</div>
<div class="code" style="left:34px;top:334px;width:25px;text-align:right;color:#156e7a">254</div>
<div class="code" style="left:34px;top:350px;width:25px;text-align:right;color:#156e7a">255</div>
<div class="code" style="left:34px;top:366px;width:25px;text-align:right;color:#156e7a">256</div>
<div class="code" style="left:34px;top:382px;width:25px;text-align:right;color:#156e7a">257</div>
<div class="code" style="left:34px;top:398px;width:25px;text-align:right;color:#156e7a">258</div>
<div class="code" style="left:34px;top:414px;width:25px;text-align:right;color:#156e7a">259</div>
<div class="code" style="left:34px;top:430px;width:25px;text-align:right;color:#156e7a">260</div>
<div class="code" style="left:34px;top:446px;width:25px;text-align:right;color:#156e7a">261</div>
<div class="code" style="left:34px;top:462px;width:25px;text-align:right;color:#156e7a">262</div>
<div class="code" style="left:34px;top:478px;width:25px;text-align:right;color:#156e7a">263</div>
<div class="code" style="left:34px;top:494px;width:25px;text-align:right;color:#156e7a">264</div>
<div class="code" style="left:34px;top:510px;width:25px;text-align:right;color:#156e7a">265</div>
<div class="code" style="left:34px;top:526px;width:25px;text-align:right;color:#156e7a">266</div>
<div class="code" style="left:34px;top:542px;width:25px;text-align:right;color:#156e7a">267</div>
<div class="code" style="left:34px;top:558px;width:25px;text-align:right;color:#156e7a">268</div>
<div class="code" style="left:34px;top:574px;width:25px;text-align:right;color:#156e7a">269</div>
<div class="code" style="left:34px;top:590px;width:25px;text-align:right;color:#156e7a">270</div>
<div class="code" style="left:34px;top:606px;width:25px;text-align:right;color:#156e7a">271</div>
<div class="code" style="left:34px;top:622px;width:25px;text-align:right;color:#156e7a">272</div>
<div class="r" style="left:80px;top:173px;width:4px;height:16px;background:#6bdb6b;"></div>
<div class="r" style="left:80px;top:349px;width:4px;height:32px;background:#6bdb6b;"></div>
<div class="r" style="left:80px;top:445px;width:4px;height:192px;background:#6bdb6b;"></div>
<svg class="r" style="left:87px;top:177px;" width="9" height="9" viewBox="0 0 9 9"><rect x="0.5" y="0.5" width="8" height="8" fill="#fff" stroke="#a5a5a5"/><path d="M2 4.5 H7" stroke="#424242"/></svg>
<svg class="r" style="left:87px;top:225px;" width="9" height="9" viewBox="0 0 9 9"><rect x="0.5" y="0.5" width="8" height="8" fill="#fff" stroke="#a5a5a5"/><path d="M2 4.5 H7" stroke="#424242"/></svg>
<div class="r" style="left:92px;top:508px;width:4px;height:1px;background:#a5a5a5;"></div>
<div class="r" style="left:92px;top:524px;width:4px;height:1px;background:#a5a5a5;"></div>
<div class="r" style="left:96px;top:188px;width:1038px;height:16px;background:transparent;border:2px solid #eaeaf2"></div>
<div class="r" style="left:182px;top:589px;width:385px;height:16px;background:#ab6270;"></div>
<svg class="r" style="left:9px;top:190px;" width="13" height="13" viewBox="0 0 13 13"><circle cx="6.4" cy="6.5" r="5.8" fill="#e51400"/><path d="M2.5 4.6 H6.9 V2.4 L11 6.5 L6.9 10.6 V8.4 H2.5 Z" fill="#ffd42a" stroke="#3d4a3a" stroke-width="0.8"/></svg>
<svg class="r" style="left:9px;top:591px;" width="13" height="13" viewBox="0 0 13 13"><circle cx="6.5" cy="6.5" r="5.7" fill="#e51400"/></svg>
<div class="r" style="left:182px;top:188px;width:8px;height:17px;background:#dbe0cc;border:1px solid #7a88d8;border-right:2px solid #1010e0"></div>
<div class="r" style="left:181px;top:510px;width:9px;height:16px;background:#dbe0cc;"></div>
<div class="r" style="left:98px;top:154px;width:1010px;height:4px;overflow:hidden"><div class="code" style="left:0;top:-12px">                     (                 ,    <span class="kw">string</span>, <span class="kw">string</span>, <span class="kw">string</span>, <span class="kw">string</span>&gt;&gt;();</div></div>
<div class="code" style="left:182px;top:174px;"><span class="kw">foreach</span> (<span class="kw">var</span> tuple <span class="kw">in</span> tuples)</div>
<div class="code" style="left:182px;top:190px;">{</div>
<div class="code" style="left:210px;top:222px;"><span class="kw">if</span> (<span class="ty">Convert</span>.ToString(dgvDetailsTable.CurrentRow.Cells[<span class="st">&quot;dgvcmbschoolname&quot;</span>].Value).Length &gt; 0)</div>
<div class="code" style="left:210px;top:238px;">{</div>
<div class="code" style="left:238px;top:254px;">(<span class="kw">string</span> gc2, <span class="kw">string</span> gc3, <span class="kw">string</span> gc4, <span class="kw">string</span> gc6) = (</div>
<div class="code" style="left:322px;top:286px;"><span class="ty">Convert</span>.ToString(dgvDetailsTable.CurrentRow.Cells[<span class="st">&quot;dgvcmbschoolname&quot;</span>].Value),</div>
<div class="code" style="left:322px;top:302px;"><span class="ty">Convert</span>.ToString(dgvDetailsTable.CurrentRow.Cells[<span class="st">&quot;dgvstartdate&quot;</span>].Value),</div>
<div class="code" style="left:322px;top:318px;"><span class="ty">Convert</span>.ToString(dgvDetailsTable.CurrentRow.Cells[<span class="st">&quot;dgvenddate&quot;</span>].Value),</div>
<div class="code" style="left:322px;top:334px;"><span class="ty">Convert</span>.ToString(dgvDetailsTable.CurrentRow.Cells[<span class="st">&quot;dgvcmbdegreecode&quot;</span>].Value)</div>
<div class="code" style="left:301px;top:350px;">);</div>
<div class="code" style="left:238px;top:382px;"><span class="ty">GridVariables</span>.GridColumn02 = gc2;   <span class="ty">// School Name</span></div>
<div class="code" style="left:238px;top:398px;"><span class="ty">GridVariables</span>.GridColumn03 = gc3;   <span class="ty">// Start Date</span></div>
<div class="code" style="left:238px;top:414px;"><span class="ty">GridVariables</span>.GridColumn04 = gc4;   <span class="ty">// End date</span></div>
<div class="code" style="left:238px;top:430px;"><span class="ty">GridVariables</span>.GridColumn06 = gc6;   <span class="ty">// Degree Earned</span></div>
<div class="code" style="left:238px;top:462px;">newTuples.Add(<span class="ty">Tuple</span>.Create(gc2, gc3, gc4, gc6));</div>
<div class="code" style="left:238px;top:478px;">gc2 = gc3 = gc4 = gc6 = <span class="st">&quot;&quot;</span>;</div>
<div class="code" style="left:210px;top:494px;">}</div>
<div class="code" style="left:182px;top:510px;">}</div>
<div class="code" style="left:182px;top:526px;"><span class="ty">GridVariables</span>.GridColumn01 = StaffNoValue.Text;                 <span class="ty">// Staff No Corresponding to IdValue.Text</span></div>
<div class="code" style="left:182px;top:542px;"><span class="ty">GridVariables</span>.GridColumn07 = <span class="ty">LoginDetails</span>.staticcompany;        <span class="ty">// School  Attended</span></div>
<div class="code" style="left:182px;top:558px;"><span class="ty">GridVariables</span>.GridColumn08 = <span class="ty">Convert</span>.ToInt32(IdValue.Text);     <span class="ty">// Start date</span></div>
<div class="code" style="left:182px;top:574px;"><span class="ty">GridVariables</span>.GridColumn09 = <span class="ty">Convert</span>.ToInt32(EduIdValue.Text);  <span class="ty">// End date</span></div>
<div class="code" style="left:182px;top:590px;color:#ffffff">GlobalConfig.Connection.CreateEducationForm(newTuples);</div>
<div class="code" style="left:182px;top:606px;"><span class="ty">MessageBox</span>.Show(<span class="st">&quot;Records saved to Database&quot;</span>, <span class="st">&quot;NEW RECORDS CREATION !!!&quot;</span>, <span class="ty">MessageBoxButtons</span>.OK);</div>
<div class="code" style="left:182px;top:622px;">StaffEducationList.DataSource = <span class="ty">GlobalConfig</span>.Connection.GetEducationRecords();</div>
<div class="t" style="left:199px;top:191px;color:#a0a0a0;font-size:11px;font-family:'Liberation Sans';">≤1ms elapsed</div>
<div class="r" style="left:1116px;top:154px;width:24px;height:481px;background:#e8e8ec;"></div>
<div class="r" style="left:1116px;top:154px;width:23px;height:17px;background:#e6ecf8;border:1px solid #a4aec6"></div>
<svg class="r" style="left:1120px;top:155px;" width="15" height="15" viewBox="0 0 15 15"><path d="M2 7 H13 M2 9 H13" stroke="#1e1e1e" stroke-width="1.3"/><path d="M7.5 1 V6 M5.5 3 L7.5 1 L9.5 3 M7.5 14 V10 M5.5 12 L7.5 14 L9.5 12" stroke="#1e1e1e" fill="none" stroke-width="1.2"/></svg>
<svg class="r" style="left:1122px;top:176px;" width="11" height="6" viewBox="0 0 11 6"><path d="M0 6 L5.5 0 L11 6 Z" fill="#868999"/></svg>
<svg class="r" style="left:1122px;top:622px;" width="11" height="6" viewBox="0 0 11 6"><path d="M0 0 L5.5 6 L11 0 Z" fill="#868999"/></svg>
<div class="r" style="left:1117px;top:354px;width:4px;height:25px;background:#6bdb6b;"></div>
<div class="r" style="left:1128px;top:354px;width:5px;height:6px;background:#933842;"></div>
<div class="r" style="left:1128px;top:371px;width:5px;height:6px;background:#933842;"></div>
<div class="r" style="left:1116px;top:356px;width:23px;height:3px;background:#0000cd;"></div>
<div class="r" style="left:1120px;top:378px;width:15px;height:24px;background:#c2c3c9;"></div>
<div class="r" style="left:1134px;top:406px;width:5px;height:6px;background:#a9a9a9;"></div>
<div class="r" style="left:1134px;top:422px;width:5px;height:13px;background:#a9a9a9;"></div>
<div class="r" style="left:1134px;top:465px;width:5px;height:3px;background:#a9a9a9;"></div>
<div class="r" style="left:1134px;top:510px;width:5px;height:5px;background:#a9a9a9;"></div>
<div class="r" style="left:1134px;top:524px;width:5px;height:6px;background:#a9a9a9;"></div>
<div class="r" style="left:6px;top:635px;width:1134px;height:17px;background:#e8e8ec;"></div>
<div class="r" style="left:7px;top:636px;width:60px;height:16px;background:#ffffff;border:1px solid #cccedb"></div>
<div class="t" style="left:10px;top:639px;color:#1e1e1e;font-size:12px;font-family:'Liberation Sans';">100 %</div>
<svg class="r" style="left:59px;top:643px;" width="5" height="3" viewBox="0 0 5 3"><path d="M0 0 H5 L2.5 3 Z" fill="#1e1e1e"/></svg>
<svg class="r" style="left:73px;top:639px;" width="6" height="11" viewBox="0 0 6 11"><path d="M6 0 L0 5.5 L6 11 Z" fill="#868999"/></svg>
<div class="r" style="left:84px;top:638px;width:536px;height:12px;background:#c2c3c9;"></div>
<svg class="r" style="left:1104px;top:639px;" width="6" height="11" viewBox="0 0 6 11"><path d="M0 0 L6 5.5 L0 11 Z" fill="#868999"/></svg>
<div class="r" style="left:6px;top:652px;width:1134px;height:1px;background:#8e9bbc;"></div>
<div class="r" style="left:1139px;top:154px;width:1px;height:499px;background:#8e9bbc;"></div>
<div class="r" style="left:263px;top:190px;width:875px;height:18px;background:rgba(0,0,0,0.12);"></div>
<div class="r" style="left:260px;top:187px;width:876px;height:19px;background:#e9ebf0;border:1px solid #c5cad6"></div>
<div class="r" style="left:278px;top:189px;width:855px;height:16px;background:#c9d1de;"></div>
<svg class="r" style="left:265px;top:192px;" width="8" height="8" viewBox="0 0 8 8"><path d="M7 1 V7 H1 Z" fill="#1e1e1e"/></svg>
<svg class="r" style="left:278px;top:191px;" width="12" height="11" viewBox="0 0 12 11"><path d="M0.8 3.8 L6.5 0.8 L11.2 3.2 V7.6 L5.5 10.4 L0.8 8 Z" fill="#1c5ca8"/><path d="M2.2 3.9 L6.4 1.9 L8 2.7 L3.8 4.7 Z" fill="#e8f0fa"/></svg>
<div class="t" style="left:297px;top:191px;color:#1e1e1e;font-size:12px;font-family:'Liberation Sans';">tuples</div>
<div class="r" style="left:331px;top:189px;width:1px;height:16px;background:#a6afc0;"></div>
<div class="t" style="left:336px;top:190px;color:#1e1e1e;font-size:12px;font-family:'Liberation Sans';letter-spacing:-0.114px;">{System.Linq.Enumerable.WhereSelectEnumerableIterator&lt;System.Windows.Forms.DataGridViewRow, System.Tuple&lt;string, string, string, string&gt;&gt;}</div>
<svg class="r" style="left:1117px;top:190px;" width="16" height="12" viewBox="0 0 16 12"><path d="M2 3 H9 V9 H2 Z M9 6 H15 M2 1 V11" stroke="#424242" stroke-width="1.3" fill="#e9ebf0"/></svg>
<div class="r" style="left:281px;top:208px;width:477px;height:51px;background:rgba(0,0,0,0.12);"></div>
<div class="r" style="left:277px;top:205px;width:478px;height:51px;background:#eeeef2;border:1px solid #c5cad6"></div>
<div class="r" style="left:278px;top:239px;width:476px;height:16px;background:#c9d1de;"></div>
<div class="r" style="left:430px;top:206px;width:1px;height:49px;background:#c8ccd6;"></div>
<div class="t" style="left:314px;top:209px;color:#8a8a8a;font-size:12px;font-family:'Liberation Sans';">Current</div>
<div class="t" style="left:314px;top:225px;color:#8a8a8a;font-size:12px;font-family:'Liberation Sans';">Non-Public members</div>
<div class="t" style="left:314px;top:241px;color:#5a5a5a;font-size:12px;font-family:'Liberation Sans';">Results View</div>
<svg class="r" style="left:283px;top:210px;" width="6" height="9" viewBox="0 0 6 9"><path d="M0.5 0.5 L5 4.5 L0.5 8.5 Z" fill="none" stroke="#1e1e1e"/></svg>
<svg class="r" style="left:283px;top:226px;" width="6" height="9" viewBox="0 0 6 9"><path d="M0.5 0.5 L5 4.5 L0.5 8.5 Z" fill="none" stroke="#1e1e1e"/></svg>
<svg class="r" style="left:284px;top:243px;" width="7" height="7" viewBox="0 0 7 7"><path d="M6 0 V6 H0 Z" fill="#1e1e1e"/></svg>
<svg class="r" style="left:296px;top:208px;" width="14" height="14" viewBox="0 0 14 14"><path d="M2 12 L8 6 M7 7 C5 4 7 1 10 1 L8.5 3 L10.5 5 L13 3.5 C13 6.5 10 8 8 7" stroke="#1e1e1e" stroke-width="2" fill="#1e1e1e"/></svg>
<svg class="r" style="left:297px;top:225px;" width="12" height="11" viewBox="0 0 12 11"><path d="M0.8 3.8 L6.5 0.8 L11.2 3.2 V7.6 L5.5 10.4 L0.8 8 Z" fill="#1c5ca8"/><path d="M2.2 3.9 L6.4 1.9 L8 2.7 L3.8 4.7 Z" fill="#e8f0fa"/></svg>
<svg class="r" style="left:296px;top:240px;" width="13" height="14" viewBox="0 0 13 14"><path d="M6.5 1.5 L11.5 4.2 V9.8 L6.5 12.5 L1.5 9.8 V4.2 Z M1.5 4.2 L6.5 7 L11.5 4.2 M6.5 7 V12.5" fill="none" stroke="#68217a" stroke-width="1.1"/></svg>
<div class="t" style="left:435px;top:209px;color:#8a8a8a;font-size:12px;font-family:'Liberation Sans';letter-spacing:1.141px;">{(,,,)}</div>
<div class="t" style="left:435px;top:241px;color:#5a5a5a;font-size:12px;font-family:'Liberation Sans';letter-spacing:-0.163px;">Expanding the Results View will enumerate the IEnumerable</div>
<div class="r" style="left:298px;top:259px;width:456px;height:50px;background:rgba(0,0,0,0.10);"></div>
<div class="r" style="left:293px;top:256px;width:456px;height:51px;background:#ffffff;border:1px solid #c5cad6"></div>
<div class="r" style="left:347px;top:258px;width:1px;height:48px;background:#c8ccd6;"></div>
<svg class="r" style="left:300px;top:260px;" width="6" height="9" viewBox="0 0 6 9"><path d="M0.5 0.5 L5 4.5 L0.5 8.5 Z" fill="none" stroke="#1e1e1e"/></svg>
<svg class="r" style="left:312px;top:259px;" width="12" height="11" viewBox="0 0 12 11"><path d="M0.8 3.8 L6.5 0.8 L11.2 3.2 V7.6 L5.5 10.4 L0.8 8 Z" fill="#1c5ca8"/><path d="M2.2 3.9 L6.4 1.9 L8 2.7 L3.8 4.7 Z" fill="#e8f0fa"/></svg>
<div class="t" style="left:331px;top:259px;color:#1e1e1e;font-size:12px;font-family:'Liberation Sans';">[0]</div>
<div class="t" style="left:352px;top:259px;color:#1e1e1e;font-size:12px;font-family:'Liberation Sans';letter-spacing:-0.389px;">{(LEEDS, 01-05-2019 12:00:00 AM, 31-05-2019 12:00:00 AM, O.N.D)}</div>
<svg class="r" style="left:300px;top:276px;" width="6" height="9" viewBox="0 0 6 9"><path d="M0.5 0.5 L5 4.5 L0.5 8.5 Z" fill="none" stroke="#1e1e1e"/></svg>
<svg class="r" style="left:312px;top:275px;" width="12" height="11" viewBox="0 0 12 11"><path d="M0.8 3.8 L6.5 0.8 L11.2 3.2 V7.6 L5.5 10.4 L0.8 8 Z" fill="#1c5ca8"/><path d="M2.2 3.9 L6.4 1.9 L8 2.7 L3.8 4.7 Z" fill="#e8f0fa"/></svg>
<div class="t" style="left:331px;top:275px;color:#1e1e1e;font-size:12px;font-family:'Liberation Sans';">[1]</div>
<div class="t" style="left:352px;top:275px;color:#1e1e1e;font-size:12px;font-family:'Liberation Sans';letter-spacing:-0.380px;">{(LANCASTER, 02-05-2019 12:00:00 AM, 29-05-2019 12:00:00 AM, W.A.E.C)}</div>
<svg class="r" style="left:300px;top:292px;" width="6" height="9" viewBox="0 0 6 9"><path d="M0.5 0.5 L5 4.5 L0.5 8.5 Z" fill="none" stroke="#1e1e1e"/></svg>
<svg class="r" style="left:312px;top:291px;" width="12" height="11" viewBox="0 0 12 11"><path d="M0.8 3.8 L6.5 0.8 L11.2 3.2 V7.6 L5.5 10.4 L0.8 8 Z" fill="#1c5ca8"/><path d="M2.2 3.9 L6.4 1.9 L8 2.7 L3.8 4.7 Z" fill="#e8f0fa"/></svg>
<div class="t" style="left:331px;top:291px;color:#1e1e1e;font-size:12px;font-family:'Liberation Sans';">[2]</div>
<div class="t" style="left:352px;top:291px;color:#1e1e1e;font-size:12px;font-family:'Liberation Sans';letter-spacing:1.141px;">{(,,,)}</div>
<div class="r" style="left:1146px;top:111px;width:213px;height:22px;background:#4d6082;border:1px solid #5f7396;border-bottom:none"></div>
<div class="t" style="left:1151px;top:117px;color:#ffffff;font-size:12px;font-family:'Liberation Sans';">Solution Explorer</div>
<svg class="r" style="left:1310px;top:119px;" width="9" height="5" viewBox="0 0 9 5"><path d="M0 0 H9 L4.5 5 Z" fill="#e0e3e8"/></svg>
<svg class="r" style="left:1326px;top:115px;" width="11" height="14" viewBox="0 0 11 14"><path d="M3 1 H8 V8 H3 Z M1 8 H10 M5.5 8 V13" stroke="#e0e3e8" stroke-width="1.3" fill="none"/></svg>
<svg class="r" style="left:1343px;top:116px;" width="11" height="11" viewBox="0 0 11 11"><path d="M1 1 L10 10 M10 1 L1 10" stroke="#e0e3e8" stroke-width="1.4"/></svg>
<div class="r" style="left:1146px;top:133px;width:213px;height:29px;background:#cfd6e5;"></div>
<div class="r" style="left:1349px;top:133px;width:10px;height:29px;background:#d6dbe9;"></div>
<svg class="r" style="left:1351px;top:137px;" width="7" height="5" viewBox="0 0 7 5"><path d="M0 0 L2.5 2.5 L0 5 Z M4 0 L6.5 2.5 L4 5 Z" fill="#1e1e1e"/></svg>
<svg class="r" style="left:1155px;top:139px;" width="14" height="14" viewBox="0 0 14 14"><circle cx="7" cy="7" r="6.5" fill="#b4b7bc"/><path d="M3 7 H11 M3 7 L6.5 3.5 M3 7 L6.5 10.5" stroke="#e6e7ea" stroke-width="1.8" fill="none"/></svg>
<svg class="r" style="left:1177px;top:139px;" width="14" height="14" viewBox="0 0 14 14"><circle cx="7" cy="7" r="6.5" fill="#b4b7bc"/><path d="M11 7 H3 M11 7 L7.5 3.5 M11 7 L7.5 10.5" stroke="#e6e7ea" stroke-width="1.8" fill="none"/></svg>
<svg class="r" style="left:1198px;top:138px;" width="16" height="15" viewBox="0 0 16 15"><path d="M1 8 L8 1 L15 8 M3 6 V14 H13 V6 M6 14 V9 H10 V14" stroke="#1e1e1e" stroke-width="1.4" fill="none"/></svg>
<svg class="r" style="left:1221px;top:138px;" width="16" height="16" viewBox="0 0 16 16"><path d="M7 2.5 H10 L11 3.5 H15 V11 H7 Z" fill="#dcb67a"/><rect x="1.5" y="6.5" width="9" height="7" fill="#cfd6e5" stroke="#1e1e1e" stroke-width="1.2"/><rect x="1.5" y="6.5" width="9" height="2" fill="#1e1e1e"/><path d="M3 4.5 V2.5 H6 M12 12 V14.5 H9.5" stroke="#00539c" stroke-width="1.2" fill="none"/></svg>
<svg class="r" style="left:1244px;top:146px;" width="5" height="3" viewBox="0 0 5 3"><path d="M0 0 H5 L2.5 3 Z" fill="#1e1e1e"/></svg>
<div class="r" style="left:1256px;top:137px;width:1px;height:20px;background:#8a93a6;"></div>
<svg class="r" style="left:1265px;top:137px;" width="17" height="17" viewBox="0 0 17 17"><path d="M2 1 H6 M4 1 V4" stroke="#1e1e1e"/><circle cx="10" cy="10" r="5.3" fill="none" stroke="#1e1e1e" stroke-width="1.3"/><path d="M10 7 V10 H12.5" stroke="#1e1e1e" fill="none"/></svg>
<svg class="r" style="left:1288px;top:146px;" width="5" height="3" viewBox="0 0 5 3"><path d="M0 0 H5 L2.5 3 Z" fill="#1e1e1e"/></svg>
<svg class="r" style="left:1299px;top:139px;" width="15" height="14" viewBox="0 0 15 14"><path d="M14 4 H2 M5 1 L2 4 L5 7 M1 10 H13 M10 7 L13 10 L10 13" stroke="#1e1e1e" stroke-width="1.7" fill="none"/></svg>
<svg class="r" style="left:1321px;top:139px;" width="14" height="14" viewBox="0 0 14 14"><path d="M12 7 A5 5 0 1 1 8 2.2" fill="none" stroke="#b4b7bc" stroke-width="1.8"/><path d="M7 0 L11 2.5 L7 5 Z" fill="#b4b7bc"/></svg>
<div class="r" style="left:1146px;top:162px;width:213px;height:21px;background:#ffffff;border:1px solid #cccedb"></div>
<div class="t" style="left:1152px;top:167px;color:#717171;font-size:12px;font-family:'Liberation Sans';letter-spacing:-0.184px;">Search Solution Explorer (Ctrl+;)</div>
<svg class="r" style="left:1333px;top:164px;" width="14" height="14" viewBox="0 0 14 14"><circle cx="8.5" cy="5.5" r="3.8" fill="none" stroke="#424242" stroke-width="1.6"/><path d="M6 8 L1.5 12.5" stroke="#424242" stroke-width="2.2"/></svg>
<svg class="r" style="left:1351px;top:170px;" width="5" height="3" viewBox="0 0 5 3"><path d="M0 0 H5 L2.5 3 Z" fill="#424242"/></svg>
<div class="r" style="left:1146px;top:183px;width:213px;height:478px;background:#ffffff;border-left:1px solid #8b9bbd"></div>
<div class="r" style="left:1147px;top:205px;width:195px;height:18px;background:#ccd3df;"></div>
<svg class="r" style="left:1152px;top:193px;" width="6" height="7" viewBox="0 0 6 7"><path d="M1.2 3 V2 A1.8 1.8 0 0 1 4.8 2 V3" stroke="#1ba1e2" fill="none"/><rect x="0" y="3" width="6" height="4" fill="#1ba1e2"/><rect x="2.5" y="4" width="1" height="2" fill="#fff"/></svg>
<svg class="r" style="left:1160px;top:189px;" width="15" height="14" viewBox="0 0 15 14"><path d="M3 0.5 H14.5 V12.5 H11" stroke="#1e1e1e" fill="none"/><path d="M3 0.5 V5" stroke="#1e1e1e"/><rect x="3" y="1" width="11" height="2" fill="#1e1e1e"/><path d="M1 8 L3 7 L6 10 L9 7 V13 L6 10 L3 13 L1 12 Z" fill="#68217a"/></svg>
<div class="t" style="left:1180px;top:190px;color:#1e1e1e;font-size:12px;font-family:'Liberation Sans';">Solution &#x27;TournamentTracker&#x27; (</div>
<svg class="r" style="left:1156px;top:210px;" width="7" height="7" viewBox="0 0 7 7"><path d="M6.5 0 V6.5 H0 Z" fill="#1e1e1e"/></svg>
<svg class="r" style="left:1170px;top:211px;" width="6" height="7" viewBox="0 0 6 7"><path d="M0.5 4 L2.2 6 L5.5 0.5" stroke="#e51400" stroke-width="1.4" fill="none"/></svg>
<svg class="r" style="left:1178px;top:207px;" width="15" height="14" viewBox="0 0 15 14"><rect x="0.5" y="0.5" width="14" height="13" fill="#fff" stroke="#388a34"/><text x="7.5" y="10.5" font-size="9" text-anchor="middle" fill="#1e1e1e" font-family="Liberation Sans">C#</text></svg>
<div class="t" style="left:1198px;top:208px;color:#1e1e1e;font-size:12px;font-family:'Liberation Sans';">TrackerLibrary</div>
<svg class="r" style="left:1176px;top:227px;" width="6" height="10" viewBox="0 0 6 10"><path d="M0.6 0.8 L5.2 5 L0.6 9.2 Z" fill="none" stroke="#1e1e1e" stroke-width="1.1"/></svg>
<svg class="r" style="left:1189px;top:229px;" width="6" height="7" viewBox="0 0 6 7"><path d="M1.2 3 V2 A1.8 1.8 0 0 1 4.8 2 V3" stroke="#1ba1e2" fill="none"/><rect x="0" y="3" width="6" height="4" fill="#1ba1e2"/><rect x="2.5" y="4" width="1" height="2" fill="#fff"/></svg>
<svg class="r" style="left:1196px;top:225px;" width="15" height="14" viewBox="0 0 15 14"><path d="M2 13 L8 7" stroke="#1e1e1e" stroke-width="2.5"/><path d="M7 8 C5 5 7 1 11 1 L9 3.5 L11 5.5 L14 3.5 C14 7 11 9 8 8" fill="#1e1e1e" stroke="#1e1e1e" stroke-width="1.2"/></svg>
<div class="t" style="left:1216px;top:226px;color:#1e1e1e;font-size:12px;font-family:'Liberation Sans';">Properties</div>
<svg class="r" style="left:1176px;top:245px;" width="6" height="10" viewBox="0 0 6 10"><path d="M0.6 0.8 L5.2 5 L0.6 9.2 Z" fill="none" stroke="#1e1e1e" stroke-width="1.1"/></svg>
<svg class="r" style="left:1196px;top:246px;" width="15" height="8" viewBox="0 0 15 8"><rect x="1" y="2" width="4" height="4" fill="#1e1e1e"/><rect x="9" y="0" width="6" height="7" fill="#1e1e1e"/><rect x="5" y="3.5" width="4" height="1" fill="#1e1e1e"/></svg>
<div class="t" style="left:1216px;top:244px;color:#1e1e1e;font-size:12px;font-family:'Liberation Sans';">References</div>
<svg class="r" style="left:1175px;top:264px;" width="7" height="7" viewBox="0 0 7 7"><path d="M6.5 0 V6.5 H0 Z" fill="#1e1e1e"/></svg>
<svg class="r" style="left:1196px;top:262px;" width="15" height="12" viewBox="0 0 15 12"><path d="M1 2 H6 L7 3.5 H14 V11 H1 Z" fill="#dcb67a"/><path d="M2.5 5 H14 V10 H2.5 Z" fill="#f5deb3"/></svg>
<div class="t" style="left:1216px;top:262px;color:#1e1e1e;font-size:12px;font-family:'Liberation Sans';">DataAccess</div>
<svg class="r" style="left:1194px;top:281px;" width="6" height="10" viewBox="0 0 6 10"><path d="M0.6 0.8 L5.2 5 L0.6 9.2 Z" fill="none" stroke="#1e1e1e" stroke-width="1.1"/></svg>
<svg class="r" style="left:1207px;top:284px;" width="6" height="6" viewBox="0 0 6 6"><path d="M0 3 H6 M3 0 V6" stroke="#388a34" stroke-width="1.1"/></svg>
<svg class="r" style="left:1215px;top:281px;" width="13" height="10" viewBox="0 0 13 10"><path d="M6 3.2 C5.5 2.3 4.8 1.9 3.8 1.9 C2.2 1.9 1.2 3.2 1.2 5.2 C1.2 7.3 2.2 8.5 3.8 8.5 C4.8 8.5 5.5 8.1 6 7.2" fill="none" stroke="#388a34" stroke-width="1.9"/><path d="M7.3 2.6 H12 M7.3 4.9 H12 M8.9 0.6 V7 M10.6 0.6 V7" stroke="#388a34" stroke-width="1"/></svg>
<div class="t" style="left:1234px;top:280px;color:#1e1e1e;font-size:12px;font-family:'Liberation Sans';">DataGridViewRow.cs</div>
<svg class="r" style="left:1194px;top:299px;" width="6" height="10" viewBox="0 0 6 10"><path d="M0.6 0.8 L5.2 5 L0.6 9.2 Z" fill="none" stroke="#1e1e1e" stroke-width="1.1"/></svg>
<svg class="r" style="left:1207px;top:301px;" width="6" height="7" viewBox="0 0 6 7"><path d="M0.5 4 L2.2 6 L5.5 0.5" stroke="#e51400" stroke-width="1.4" fill="none"/></svg>
<svg class="r" style="left:1215px;top:299px;" width="13" height="10" viewBox="0 0 13 10"><path d="M6 3.2 C5.5 2.3 4.8 1.9 3.8 1.9 C2.2 1.9 1.2 3.2 1.2 5.2 C1.2 7.3 2.2 8.5 3.8 8.5 C4.8 8.5 5.5 8.1 6 7.2" fill="none" stroke="#388a34" stroke-width="1.9"/><path d="M7.3 2.6 H12 M7.3 4.9 H12 M8.9 0.6 V7 M10.6 0.6 V7" stroke="#388a34" stroke-width="1"/></svg>
<div class="t" style="left:1234px;top:298px;color:#1e1e1e;font-size:12px;font-family:'Liberation Sans';">IDataConnection.cs</div>
<svg class="r" style="left:1194px;top:317px;" width="6" height="10" viewBox="0 0 6 10"><path d="M0.6 0.8 L5.2 5 L0.6 9.2 Z" fill="none" stroke="#1e1e1e" stroke-width="1.1"/></svg>
<svg class="r" style="left:1207px;top:320px;" width="6" height="6" viewBox="0 0 6 6"><path d="M0 3 H6 M3 0 V6" stroke="#388a34" stroke-width="1.1"/></svg>
<svg class="r" style="left:1215px;top:317px;" width="13" height="10" viewBox="0 0 13 10"><path d="M6 3.2 C5.5 2.3 4.8 1.9 3.8 1.9 C2.2 1.9 1.2 3.2 1.2 5.2 C1.2 7.3 2.2 8.5 3.8 8.5 C4.8 8.5 5.5 8.1 6 7.2" fill="none" stroke="#388a34" stroke-width="1.9"/><path d="M7.3 2.6 H12 M7.3 4.9 H12 M8.9 0.6 V7 M10.6 0.6 V7" stroke="#388a34" stroke-width="1"/></svg>
<div class="t" style="left:1234px;top:316px;color:#1e1e1e;font-size:12px;font-family:'Liberation Sans';">PgrConnector.cs</div>
<svg class="r" style="left:1194px;top:335px;" width="6" height="10" viewBox="0 0 6 10"><path d="M0.6 0.8 L5.2 5 L0.6 9.2 Z" fill="none" stroke="#1e1e1e" stroke-width="1.1"/></svg>
<svg class="r" style="left:1207px;top:337px;" width="6" height="7" viewBox="0 0 6 7"><path d="M0.5 4 L2.2 6 L5.5 0.5" stroke="#e51400" stroke-width="1.4" fill="none"/></svg>
<svg class="r" style="left:1215px;top:335px;" width="13" height="10" viewBox="0 0 13 10"><path d="M6 3.2 C5.5 2.3 4.8 1.9 3.8 1.9 C2.2 1.9 1.2 3.2 1.2 5.2 C1.2 7.3 2.2 8.5 3.8 8.5 C4.8 8.5 5.5 8.1 6 7.2" fill="none" stroke="#388a34" stroke-width="1.9"/><path d="M7.3 2.6 H12 M7.3 4.9 H12 M8.9 0.6 V7 M10.6 0.6 V7" stroke="#388a34" stroke-width="1"/></svg>
<div class="t" style="left:1234px;top:334px;color:#1e1e1e;font-size:12px;font-family:'Liberation Sans';">SqlConnector.cs</div>
<svg class="r" style="left:1194px;top:353px;" width="6" height="10" viewBox="0 0 6 10"><path d="M0.6 0.8 L5.2 5 L0.6 9.2 Z" fill="none" stroke="#1e1e1e" stroke-width="1.1"/></svg>
<svg class="r" style="left:1207px;top:355px;" width="6" height="7" viewBox="0 0 6 7"><path d="M0.5 4 L2.2 6 L5.5 0.5" stroke="#e51400" stroke-width="1.4" fill="none"/></svg>
<svg class="r" style="left:1215px;top:353px;" width="13" height="10" viewBox="0 0 13 10"><path d="M6 3.2 C5.5 2.3 4.8 1.9 3.8 1.9 C2.2 1.9 1.2 3.2 1.2 5.2 C1.2 7.3 2.2 8.5 3.8 8.5 C4.8 8.5 5.5 8.1 6 7.2" fill="none" stroke="#388a34" stroke-width="1.9"/><path d="M7.3 2.6 H12 M7.3 4.9 H12 M8.9 0.6 V7 M10.6 0.6 V7" stroke="#388a34" stroke-width="1"/></svg>
<div class="t" style="left:1234px;top:352px;color:#1e1e1e;font-size:12px;font-family:'Liberation Sans';">TextConnector.cs</div>
<svg class="r" style="left:1194px;top:371px;" width="6" height="10" viewBox="0 0 6 10"><path d="M0.6 0.8 L5.2 5 L0.6 9.2 Z" fill="none" stroke="#1e1e1e" stroke-width="1.1"/></svg>
<svg class="r" style="left:1207px;top:373px;" width="6" height="7" viewBox="0 0 6 7"><path d="M1.2 3 V2 A1.8 1.8 0 0 1 4.8 2 V3" stroke="#1ba1e2" fill="none"/><rect x="0" y="3" width="6" height="4" fill="#1ba1e2"/><rect x="2.5" y="4" width="1" height="2" fill="#fff"/></svg>
<svg class="r" style="left:1215px;top:371px;" width="13" height="10" viewBox="0 0 13 10"><path d="M6 3.2 C5.5 2.3 4.8 1.9 3.8 1.9 C2.2 1.9 1.2 3.2 1.2 5.2 C1.2 7.3 2.2 8.5 3.8 8.5 C4.8 8.5 5.5 8.1 6 7.2" fill="none" stroke="#388a34" stroke-width="1.9"/><path d="M7.3 2.6 H12 M7.3 4.9 H12 M8.9 0.6 V7 M10.6 0.6 V7" stroke="#388a34" stroke-width="1"/></svg>
<div class="t" style="left:1234px;top:370px;color:#1e1e1e;font-size:12px;font-family:'Liberation Sans';">TextConnectorProce</div>
<svg class="r" style="left:1194px;top:389px;" width="6" height="10" viewBox="0 0 6 10"><path d="M0.6 0.8 L5.2 5 L0.6 9.2 Z" fill="none" stroke="#1e1e1e" stroke-width="1.1"/></svg>
<svg class="r" style="left:1207px;top:392px;" width="6" height="6" viewBox="0 0 6 6"><path d="M0 3 H6 M3 0 V6" stroke="#388a34" stroke-width="1.1"/></svg>
<svg class="r" style="left:1215px;top:389px;" width="13" height="10" viewBox="0 0 13 10"><path d="M6 3.2 C5.5 2.3 4.8 1.9 3.8 1.9 C2.2 1.9 1.2 3.2 1.2 5.2 C1.2 7.3 2.2 8.5 3.8 8.5 C4.8 8.5 5.5 8.1 6 7.2" fill="none" stroke="#388a34" stroke-width="1.9"/><path d="M7.3 2.6 H12 M7.3 4.9 H12 M8.9 0.6 V7 M10.6 0.6 V7" stroke="#388a34" stroke-width="1"/></svg>
<div class="t" style="left:1234px;top:388px;color:#1e1e1e;font-size:12px;font-family:'Liberation Sans';">Tuple.cs</div>
<svg class="r" style="left:1175px;top:408px;" width="7" height="7" viewBox="0 0 7 7"><path d="M6.5 0 V6.5 H0 Z" fill="#1e1e1e"/></svg>
<svg class="r" style="left:1196px;top:406px;" width="15" height="12" viewBox="0 0 15 12"><path d="M1 2 H6 L7 3.5 H14 V11 H1 Z" fill="#dcb67a"/><path d="M2.5 5 H14 V10 H2.5 Z" fill="#f5deb3"/></svg>
<div class="t" style="left:1216px;top:406px;color:#1e1e1e;font-size:12px;font-family:'Liberation Sans';">Models</div>
<div class="r" style="left:1146px;top:183px;width:196px;height:478px;overflow:hidden">
<div class="t" style="left:88px;top:241px;color:#1e1e1e">AbseCodeModel.cs</div>
<div class="t" style="left:88px;top:259px;color:#1e1e1e">AnnualLeaveModel.cs</div>
<div class="t" style="left:88px;top:277px;color:#1e1e1e">BankAccountsCompany.cs</div>
<div class="t" style="left:88px;top:295px;color:#1e1e1e">CntltabaModel.cs</div>
<div class="t" style="left:88px;top:313px;color:#1e1e1e">ContributionDetailsModel.cs</div>
<div class="t" style="left:88px;top:331px;color:#1e1e1e">ContributionsModel.cs</div>
<div class="t" style="left:88px;top:349px;color:#1e1e1e">DateSpecModel.cs</div>
<div class="t" style="left:88px;top:367px;color:#1e1e1e">DegreesModel.cs</div>
<div class="t" style="left:88px;top:385px;color:#1e1e1e">DesignationsModel.cs</div>
<div class="t" style="left:88px;top:403px;color:#1e1e1e">EducationModel.cs</div>
<div class="t" style="left:88px;top:421px;color:#1e1e1e">EmployeeModel.cs</div>
<div class="t" style="left:88px;top:439px;color:#1e1e1e">JobHistoryModel.cs</div>
<div class="t" style="left:88px;top:457px;color:#1e1e1e">MatchupEntryModel.cs</div>
<div class="t" style="left:88px;top:475px;color:#1e1e1e">MatchupModel.cs</div>
</div>
<svg class="r" style="left:1194px;top:425px;" width="6" height="10" viewBox="0 0 6 10"><path d="M0.6 0.8 L5.2 5 L0.6 9.2 Z" fill="none" stroke="#1e1e1e" stroke-width="1.1"/></svg>
<svg class="r" style="left:1207px;top:428px;" width="6" height="6" viewBox="0 0 6 6"><path d="M0 3 H6 M3 0 V6" stroke="#388a34" stroke-width="1.1"/></svg>
<svg class="r" style="left:1215px;top:425px;" width="13" height="10" viewBox="0 0 13 10"><path d="M6 3.2 C5.5 2.3 4.8 1.9 3.8 1.9 C2.2 1.9 1.2 3.2 1.2 5.2 C1.2 7.3 2.2 8.5 3.8 8.5 C4.8 8.5 5.5 8.1 6 7.2" fill="none" stroke="#388a34" stroke-width="1.9"/><path d="M7.3 2.6 H12 M7.3 4.9 H12 M8.9 0.6 V7 M10.6 0.6 V7" stroke="#388a34" stroke-width="1"/></svg>
<svg class="r" style="left:1194px;top:443px;" width="6" height="10" viewBox="0 0 6 10"><path d="M0.6 0.8 L5.2 5 L0.6 9.2 Z" fill="none" stroke="#1e1e1e" stroke-width="1.1"/></svg>
<svg class="r" style="left:1207px;top:446px;" width="6" height="6" viewBox="0 0 6 6"><path d="M0 3 H6 M3 0 V6" stroke="#388a34" stroke-width="1.1"/></svg>
<svg class="r" style="left:1215px;top:443px;" width="13" height="10" viewBox="0 0 13 10"><path d="M6 3.2 C5.5 2.3 4.8 1.9 3.8 1.9 C2.2 1.9 1.2 3.2 1.2 5.2 C1.2 7.3 2.2 8.5 3.8 8.5 C4.8 8.5 5.5 8.1 6 7.2" fill="none" stroke="#388a34" stroke-width="1.9"/><path d="M7.3 2.6 H12 M7.3 4.9 H12 M8.9 0.6 V7 M10.6 0.6 V7" stroke="#388a34" stroke-width="1"/></svg>
<svg class="r" style="left:1194px;top:461px;" width="6" height="10" viewBox="0 0 6 10"><path d="M0.6 0.8 L5.2 5 L0.6 9.2 Z" fill="none" stroke="#1e1e1e" stroke-width="1.1"/></svg>
<svg class="r" style="left:1207px;top:464px;" width="6" height="6" viewBox="0 0 6 6"><path d="M0 3 H6 M3 0 V6" stroke="#388a34" stroke-width="1.1"/></svg>
<svg class="r" style="left:1215px;top:461px;" width="13" height="10" viewBox="0 0 13 10"><path d="M6 3.2 C5.5 2.3 4.8 1.9 3.8 1.9 C2.2 1.9 1.2 3.2 1.2 5.2 C1.2 7.3 2.2 8.5 3.8 8.5 C4.8 8.5 5.5 8.1 6 7.2" fill="none" stroke="#388a34" stroke-width="1.9"/><path d="M7.3 2.6 H12 M7.3 4.9 H12 M8.9 0.6 V7 M10.6 0.6 V7" stroke="#388a34" stroke-width="1"/></svg>
<svg class="r" style="left:1194px;top:479px;" width="6" height="10" viewBox="0 0 6 10"><path d="M0.6 0.8 L5.2 5 L0.6 9.2 Z" fill="none" stroke="#1e1e1e" stroke-width="1.1"/></svg>
<svg class="r" style="left:1207px;top:482px;" width="6" height="6" viewBox="0 0 6 6"><path d="M0 3 H6 M3 0 V6" stroke="#388a34" stroke-width="1.1"/></svg>
<svg class="r" style="left:1215px;top:479px;" width="13" height="10" viewBox="0 0 13 10"><path d="M6 3.2 C5.5 2.3 4.8 1.9 3.8 1.9 C2.2 1.9 1.2 3.2 1.2 5.2 C1.2 7.3 2.2 8.5 3.8 8.5 C4.8 8.5 5.5 8.1 6 7.2" fill="none" stroke="#388a34" stroke-width="1.9"/><path d="M7.3 2.6 H12 M7.3 4.9 H12 M8.9 0.6 V7 M10.6 0.6 V7" stroke="#388a34" stroke-width="1"/></svg>
<svg class="r" style="left:1194px;top:497px;" width="6" height="10" viewBox="0 0 6 10"><path d="M0.6 0.8 L5.2 5 L0.6 9.2 Z" fill="none" stroke="#1e1e1e" stroke-width="1.1"/></svg>
<svg class="r" style="left:1207px;top:500px;" width="6" height="6" viewBox="0 0 6 6"><path d="M0 3 H6 M3 0 V6" stroke="#388a34" stroke-width="1.1"/></svg>
<svg class="r" style="left:1215px;top:497px;" width="13" height="10" viewBox="0 0 13 10"><path d="M6 3.2 C5.5 2.3 4.8 1.9 3.8 1.9 C2.2 1.9 1.2 3.2 1.2 5.2 C1.2 7.3 2.2 8.5 3.8 8.5 C4.8 8.5 5.5 8.1 6 7.2" fill="none" stroke="#388a34" stroke-width="1.9"/><path d="M7.3 2.6 H12 M7.3 4.9 H12 M8.9 0.6 V7 M10.6 0.6 V7" stroke="#388a34" stroke-width="1"/></svg>
<svg class="r" style="left:1194px;top:515px;" width="6" height="10" viewBox="0 0 6 10"><path d="M0.6 0.8 L5.2 5 L0.6 9.2 Z" fill="none" stroke="#1e1e1e" stroke-width="1.1"/></svg>
<svg class="r" style="left:1207px;top:518px;" width="6" height="6" viewBox="0 0 6 6"><path d="M0 3 H6 M3 0 V6" stroke="#388a34" stroke-width="1.1"/></svg>
<svg class="r" style="left:1215px;top:515px;" width="13" height="10" viewBox="0 0 13 10"><path d="M6 3.2 C5.5 2.3 4.8 1.9 3.8 1.9 C2.2 1.9 1.2 3.2 1.2 5.2 C1.2 7.3 2.2 8.5 3.8 8.5 C4.8 8.5 5.5 8.1 6 7.2" fill="none" stroke="#388a34" stroke-width="1.9"/><path d="M7.3 2.6 H12 M7.3 4.9 H12 M8.9 0.6 V7 M10.6 0.6 V7" stroke="#388a34" stroke-width="1"/></svg>
<svg class="r" style="left:1194px;top:533px;" width="6" height="10" viewBox="0 0 6 10"><path d="M0.6 0.8 L5.2 5 L0.6 9.2 Z" fill="none" stroke="#1e1e1e" stroke-width="1.1"/></svg>
<svg class="r" style="left:1207px;top:536px;" width="6" height="6" viewBox="0 0 6 6"><path d="M0 3 H6 M3 0 V6" stroke="#388a34" stroke-width="1.1"/></svg>
<svg class="r" style="left:1215px;top:533px;" width="13" height="10" viewBox="0 0 13 10"><path d="M6 3.2 C5.5 2.3 4.8 1.9 3.8 1.9 C2.2 1.9 1.2 3.2 1.2 5.2 C1.2 7.3 2.2 8.5 3.8 8.5 C4.8 8.5 5.5 8.1 6 7.2" fill="none" stroke="#388a34" stroke-width="1.9"/><path d="M7.3 2.6 H12 M7.3 4.9 H12 M8.9 0.6 V7 M10.6 0.6 V7" stroke="#388a34" stroke-width="1"/></svg>
<svg class="r" style="left:1194px;top:551px;" width="6" height="10" viewBox="0 0 6 10"><path d="M0.6 0.8 L5.2 5 L0.6 9.2 Z" fill="none" stroke="#1e1e1e" stroke-width="1.1"/></svg>
<svg class="r" style="left:1207px;top:554px;" width="6" height="6" viewBox="0 0 6 6"><path d="M0 3 H6 M3 0 V6" stroke="#388a34" stroke-width="1.1"/></svg>
<svg class="r" style="left:1215px;top:551px;" width="13" height="10" viewBox="0 0 13 10"><path d="M6 3.2 C5.5 2.3 4.8 1.9 3.8 1.9 C2.2 1.9 1.2 3.2 1.2 5.2 C1.2 7.3 2.2 8.5 3.8 8.5 C4.8 8.5 5.5 8.1 6 7.2" fill="none" stroke="#388a34" stroke-width="1.9"/><path d="M7.3 2.6 H12 M7.3 4.9 H12 M8.9 0.6 V7 M10.6 0.6 V7" stroke="#388a34" stroke-width="1"/></svg>
<svg class="r" style="left:1194px;top:569px;" width="6" height="10" viewBox="0 0 6 10"><path d="M0.6 0.8 L5.2 5 L0.6 9.2 Z" fill="none" stroke="#1e1e1e" stroke-width="1.1"/></svg>
<svg class="r" style="left:1207px;top:572px;" width="6" height="6" viewBox="0 0 6 6"><path d="M0 3 H6 M3 0 V6" stroke="#388a34" stroke-width="1.1"/></svg>
<svg class="r" style="left:1215px;top:569px;" width="13" height="10" viewBox="0 0 13 10"><path d="M6 3.2 C5.5 2.3 4.8 1.9 3.8 1.9 C2.2 1.9 1.2 3.2 1.2 5.2 C1.2 7.3 2.2 8.5 3.8 8.5 C4.8 8.5 5.5 8.1 6 7.2" fill="none" stroke="#388a34" stroke-width="1.9"/><path d="M7.3 2.6 H12 M7.3 4.9 H12 M8.9 0.6 V7 M10.6 0.6 V7" stroke="#388a34" stroke-width="1"/></svg>
<svg class="r" style="left:1194px;top:587px;" width="6" height="10" viewBox="0 0 6 10"><path d="M0.6 0.8 L5.2 5 L0.6 9.2 Z" fill="none" stroke="#1e1e1e" stroke-width="1.1"/></svg>
<svg class="r" style="left:1207px;top:590px;" width="6" height="6" viewBox="0 0 6 6"><path d="M0 3 H6 M3 0 V6" stroke="#388a34" stroke-width="1.1"/></svg>
<svg class="r" style="left:1215px;top:587px;" width="13" height="10" viewBox="0 0 13 10"><path d="M6 3.2 C5.5 2.3 4.8 1.9 3.8 1.9 C2.2 1.9 1.2 3.2 1.2 5.2 C1.2 7.3 2.2 8.5 3.8 8.5 C4.8 8.5 5.5 8.1 6 7.2" fill="none" stroke="#388a34" stroke-width="1.9"/><path d="M7.3 2.6 H12 M7.3 4.9 H12 M8.9 0.6 V7 M10.6 0.6 V7" stroke="#388a34" stroke-width="1"/></svg>
<svg class="r" style="left:1194px;top:605px;" width="6" height="10" viewBox="0 0 6 10"><path d="M0.6 0.8 L5.2 5 L0.6 9.2 Z" fill="none" stroke="#1e1e1e" stroke-width="1.1"/></svg>
<svg class="r" style="left:1207px;top:608px;" width="6" height="6" viewBox="0 0 6 6"><path d="M0 3 H6 M3 0 V6" stroke="#388a34" stroke-width="1.1"/></svg>
<svg class="r" style="left:1215px;top:605px;" width="13" height="10" viewBox="0 0 13 10"><path d="M6 3.2 C5.5 2.3 4.8 1.9 3.8 1.9 C2.2 1.9 1.2 3.2 1.2 5.2 C1.2 7.3 2.2 8.5 3.8 8.5 C4.8 8.5 5.5 8.1 6 7.2" fill="none" stroke="#388a34" stroke-width="1.9"/><path d="M7.3 2.6 H12 M7.3 4.9 H12 M8.9 0.6 V7 M10.6 0.6 V7" stroke="#388a34" stroke-width="1"/></svg>
<svg class="r" style="left:1194px;top:623px;" width="6" height="10" viewBox="0 0 6 10"><path d="M0.6 0.8 L5.2 5 L0.6 9.2 Z" fill="none" stroke="#1e1e1e" stroke-width="1.1"/></svg>
<svg class="r" style="left:1207px;top:626px;" width="6" height="6" viewBox="0 0 6 6"><path d="M0 3 H6 M3 0 V6" stroke="#388a34" stroke-width="1.1"/></svg>
<svg class="r" style="left:1215px;top:623px;" width="13" height="10" viewBox="0 0 13 10"><path d="M6 3.2 C5.5 2.3 4.8 1.9 3.8 1.9 C2.2 1.9 1.2 3.2 1.2 5.2 C1.2 7.3 2.2 8.5 3.8 8.5 C4.8 8.5 5.5 8.1 6 7.2" fill="none" stroke="#388a34" stroke-width="1.9"/><path d="M7.3 2.6 H12 M7.3 4.9 H12 M8.9 0.6 V7 M10.6 0.6 V7" stroke="#388a34" stroke-width="1"/></svg>
<svg class="r" style="left:1194px;top:641px;" width="6" height="10" viewBox="0 0 6 10"><path d="M0.6 0.8 L5.2 5 L0.6 9.2 Z" fill="none" stroke="#1e1e1e" stroke-width="1.1"/></svg>
<svg class="r" style="left:1207px;top:643px;" width="6" height="7" viewBox="0 0 6 7"><path d="M1.2 3 V2 A1.8 1.8 0 0 1 4.8 2 V3" stroke="#1ba1e2" fill="none"/><rect x="0" y="3" width="6" height="4" fill="#1ba1e2"/><rect x="2.5" y="4" width="1" height="2" fill="#fff"/></svg>
<svg class="r" style="left:1215px;top:641px;" width="13" height="10" viewBox="0 0 13 10"><path d="M6 3.2 C5.5 2.3 4.8 1.9 3.8 1.9 C2.2 1.9 1.2 3.2 1.2 5.2 C1.2 7.3 2.2 8.5 3.8 8.5 C4.8 8.5 5.5 8.1 6 7.2" fill="none" stroke="#388a34" stroke-width="1.9"/><path d="M7.3 2.6 H12 M7.3 4.9 H12 M8.9 0.6 V7 M10.6 0.6 V7" stroke="#388a34" stroke-width="1"/></svg>
<div class="r" style="left:1342px;top:184px;width:17px;height:477px;background:#e8e8ec;"></div>
<svg class="r" style="left:1346px;top:192px;" width="9" height="5" viewBox="0 0 9 5"><path d="M0 5 L4.5 0 L9 5 Z" fill="#868999"/></svg>
<div class="r" style="left:1346px;top:203px;width:9px;height:135px;background:#c2c3c9;"></div>
<svg class="r" style="left:1346px;top:649px;" width="9" height="5" viewBox="0 0 9 5"><path d="M0 0 L4.5 5 L9 0 Z" fill="#868999"/></svg>
<div class="r" style="left:1146px;top:661px;width:213px;height:17px;background:#e8e8ec;"></div>
<svg class="r" style="left:1152px;top:665px;" width="5" height="9" viewBox="0 0 5 9"><path d="M5 0 L0 4.5 L5 9 Z" fill="#868999"/></svg>
<div class="r" style="left:1164px;top:665px;width:119px;height:9px;background:#c2c3c9;"></div>
<svg class="r" style="left:1333px;top:665px;" width="5" height="9" viewBox="0 0 5 9"><path d="M0 0 L5 4.5 L0 9 Z" fill="#868999"/></svg>
<div class="r" style="left:1146px;top:678px;width:74px;height:21px;background:#ffffff;"></div>
<div class="t" style="left:1152px;top:683px;color:#1e1e1e;font-size:12px;font-family:'Liberation Sans';letter-spacing:-0.286px;">Solution E...</div>
<div class="r" style="left:1220px;top:678px;width:74px;height:21px;background:#4d6082;"></div>
<div class="t" style="left:1227px;top:684px;color:#ffffff;font-size:12px;font-family:'Liberation Sans';letter-spacing:-0.503px;">Team Expl...</div>
<div class="r" style="left:1295px;top:678px;width:64px;height:21px;background:#4d6082;"></div>
<div class="t" style="left:1301px;top:684px;color:#ffffff;font-size:12px;font-family:'Liberation Sans';letter-spacing:-0.270px;">Properties</div>
<div class="r" style="left:6px;top:659px;width:564px;height:20px;background:#4d6082;border:1px solid #6f82a4"></div>
<div class="t" style="left:11px;top:664px;color:#ffffff;font-size:12px;font-family:'Liberation Sans';">Autos</div>
<svg class="r" style="left:520px;top:665px;" width="9" height="5" viewBox="0 0 9 5"><path d="M0 0 H9 L4.5 5 Z" fill="#e0e3e8"/></svg>
<svg class="r" style="left:536px;top:662px;" width="9" height="13" viewBox="0 0 9 13"><path d="M2.5 1 H6.5 V7 H2.5 Z M0.5 7 H8.5 M4.5 7 V12" stroke="#e0e3e8" stroke-width="1.3" fill="none"/></svg>
<svg class="r" style="left:552px;top:663px;" width="11" height="11" viewBox="0 0 11 11"><path d="M1 1 L10 10 M10 1 L1 10" stroke="#e0e3e8" stroke-width="1.4"/></svg>
<div class="r" style="left:6px;top:678px;width:144px;height:21px;background:#293955;"></div>
<div class="r" style="left:7px;top:678px;width:42px;height:21px;background:#ffffff;"></div>
<div class="t" style="left:12px;top:683px;color:#1e1e1e;font-size:12px;font-family:'Liberation Sans';letter-spacing:-0.138px;">Autos</div>
<div class="r" style="left:49px;top:678px;width:100px;height:21px;background:#4d6082;"></div>
<div class="r" style="left:93px;top:678px;width:1px;height:21px;background:#43577a;"></div>
<div class="t" style="left:55px;top:684px;color:#ffffff;font-size:12px;font-family:'Liberation Sans';letter-spacing:-0.281px;">Locals</div>
<div class="t" style="left:100px;top:684px;color:#ffffff;font-size:12px;font-family:'Liberation Sans';letter-spacing:-0.083px;">Watch 1</div>
<div class="r" style="left:576px;top:659px;width:564px;height:20px;background:#4d6082;border:1px solid #6f82a4"></div>
<div class="t" style="left:581px;top:664px;color:#ffffff;font-size:12px;font-family:'Liberation Sans';">Error List</div>
<svg class="r" style="left:1090px;top:665px;" width="9" height="5" viewBox="0 0 9 5"><path d="M0 0 H9 L4.5 5 Z" fill="#e0e3e8"/></svg>
<svg class="r" style="left:1106px;top:662px;" width="9" height="13" viewBox="0 0 9 13"><path d="M2.5 1 H6.5 V7 H2.5 Z M0.5 7 H8.5 M4.5 7 V12" stroke="#e0e3e8" stroke-width="1.3" fill="none"/></svg>
<svg class="r" style="left:1122px;top:663px;" width="11" height="11" viewBox="0 0 11 11"><path d="M1 1 L10 10 M10 1 L1 10" stroke="#e0e3e8" stroke-width="1.4"/></svg>
<div class="r" style="left:577px;top:678px;width:505px;height:21px;background:#4d6082;"></div>
<div class="t" style="left:582px;top:684px;color:#ffffff;font-size:12px;font-family:'Liberation Sans';letter-spacing:-0.303px;">Call Stack</div>
<div class="r" style="left:639px;top:678px;width:1px;height:21px;background:#43577a;"></div>
<div class="t" style="left:645px;top:684px;color:#ffffff;font-size:12px;font-family:'Liberation Sans';letter-spacing:-0.125px;">Breakpoints</div>
<div class="r" style="left:713px;top:678px;width:1px;height:21px;background:#43577a;"></div>
<div class="t" style="left:719px;top:684px;color:#ffffff;font-size:12px;font-family:'Liberation Sans';letter-spacing:-0.249px;">Exception Settin...</div>
<div class="r" style="left:819px;top:678px;width:1px;height:21px;background:#43577a;"></div>
<div class="t" style="left:825px;top:684px;color:#ffffff;font-size:12px;font-family:'Liberation Sans';letter-spacing:0.046px;">Command Win...</div>
<div class="r" style="left:926px;top:678px;width:1px;height:21px;background:#43577a;"></div>
<div class="t" style="left:932px;top:684px;color:#ffffff;font-size:12px;font-family:'Liberation Sans';letter-spacing:-0.064px;">Immediate Win...</div>
<div class="r" style="left:1032px;top:678px;width:1px;height:21px;background:#43577a;"></div>
<div class="t" style="left:1038px;top:684px;color:#ffffff;font-size:12px;font-family:'Liberation Sans';letter-spacing:0.161px;">Output</div>
<div class="r" style="left:1082px;top:678px;width:57px;height:21px;background:#ffffff;"></div>
<div class="t" style="left:1088px;top:683px;color:#1e1e1e;font-size:12px;font-family:'Liberation Sans';letter-spacing:-0.269px;">Error List</div>
<div class="r" style="left:0px;top:705px;width:1366px;height:23px;background:#ca5100;"></div>
<svg class="r" style="left:4px;top:710px;" width="16" height="12" viewBox="0 0 16 12"><path d="M4 1 H15 L12 11 H1 Z" fill="none" stroke="#ffffff" stroke-width="1.2"/></svg>
<div class="t" style="left:28px;top:711px;color:#ffffff;font-size:12px;font-family:'Liberation Sans';letter-spacing:-0.738px;">Ready</div>
<div class="t" style="left:606px;top:711px;color:#ffffff;font-size:12px;font-family:'Liberation Sans';">Ln 245</div>
<div class="t" style="left:698px;top:711px;color:#ffffff;font-size:12px;font-family:'Liberation Sans';">Col 13</div>
<div class="t" style="left:790px;top:711px;color:#ffffff;font-size:12px;font-family:'Liberation Sans';">Ch 13</div>
<div class="t" style="left:927px;top:711px;color:#ffffff;font-size:12px;font-family:'Liberation Sans';">INS</div>
<svg class="r" style="left:1012px;top:710px;" width="12" height="13" viewBox="0 0 12 13"><path d="M6 12 V2 M1.5 6.5 L6 2 L10.5 6.5" stroke="#fff" stroke-width="1.8" fill="none"/></svg>
<div class="t" style="left:1030px;top:711px;color:#ffffff;font-size:12px;font-family:'Liberation Sans';">23</div>
<svg class="r" style="left:1066px;top:709px;" width="14" height="14" viewBox="0 0 14 14"><path d="M2 12 L3 9 L10 2 L12 4 L5 11 Z" fill="#fff"/></svg>
<div class="t" style="left:1087px;top:711px;color:#ffffff;font-size:12px;font-family:'Liberation Sans';">99*</div>
<svg class="r" style="left:1125px;top:709px;" width="15" height="15" viewBox="0 0 15 15"><path d="M7.5 0.5 L14.5 7.5 L7.5 14.5 L0.5 7.5 Z" fill="#fff"/><circle cx="6" cy="5" r="1.3" fill="#ca5100"/><circle cx="9.5" cy="9.5" r="1.3" fill="#ca5100"/><path d="M6 5 V10 M6 5 L9.5 9.5" stroke="#ca5100"/></svg>
<div class="t" style="left:1147px;top:711px;color:#ffffff;font-size:12px;font-family:'Liberation Sans';">TournamentTracker</div>
<svg class="r" style="left:1272px;top:709px;" width="16" height="15" viewBox="0 0 16 15"><path d="M3 1 V5 L8 9 V14 M13 1 V5 L8 9" stroke="#fff" stroke-width="2" fill="none"/><path d="M1 1 H5 M11 1 H15" stroke="#fff" stroke-width="1.5"/></svg>
<div class="t" style="left:1296px;top:711px;color:#ffffff;font-size:12px;font-family:'Liberation Sans';">master</div>
<svg class="r" style="left:1335px;top:713px;" width="9" height="6" viewBox="0 0 9 6"><path d="M0 6 L4.5 0 L9 6 Z" fill="#fff"/></svg>
<div class="r" style="left:0px;top:728px;width:1366px;height:40px;background:#1f2226;"></div>
<div class="r" style="left:0px;top:728px;width:48px;height:40px;background:#0c0f14;"></div>
<svg class="r" style="left:16px;top:741px;" width="17" height="16" viewBox="0 0 17 16"><path d="M0 2.3 L6.8 1.3 V7.4 H0 Z M7.6 1.2 L17 0 V7.4 H7.6 Z M0 8.2 H6.8 V14.4 L0 13.4 Z M7.6 8.2 H17 V16 L7.6 14.5 Z" fill="#ffffff"/></svg>
<div class="r" style="left:48px;top:728px;width:344px;height:40px;background:#f2f2f2;"></div>
<svg class="r" style="left:58px;top:738px;" width="20" height="20" viewBox="0 0 20 20"><circle cx="10" cy="10" r="8.2" fill="none" stroke="#111" stroke-width="2.6"/></svg>
<div class="t" style="left:88px;top:742px;color:#333333;font-size:15px;font-family:'Liberation Sans';letter-spacing:-0.241px;-webkit-text-stroke:0">Type here to search</div>
<svg class="r" style="left:365px;top:739px;" width="12" height="18" viewBox="0 0 12 18"><rect x="3.5" y="0.7" width="5" height="10" rx="2.5" fill="none" stroke="#333" stroke-width="1.2"/><path d="M1 7 C1 14 11 14 11 7 M6 12.5 V17 M3 17 H9" stroke="#333" stroke-width="1.2" fill="none"/></svg>
<svg class="r" style="left:407px;top:740px;" width="18" height="16" viewBox="0 0 18 16"><rect x="3" y="3" width="11" height="10" fill="none" stroke="#fff" stroke-width="1.2"/><path d="M0 1 H17 M0 15 H17 M16.5 4 V12" stroke="#fff" stroke-width="1.2"/></svg>
<svg class="r" style="left:456px;top:739px;" width="22" height="16" viewBox="0 0 22 16"><path d="M1 5 L11 0 L21 5 V16 H1 Z" fill="#ffffff"/><path d="M1 5 L11 11 L21 5" stroke="#1f2226" stroke-width="1.3" fill="none"/><path d="M11 11 L21 16" stroke="#1f2226" stroke-width="1.3"/></svg>
<svg class="r" style="left:504px;top:735px;" width="24" height="24" viewBox="0 0 24 24"><path d="M2 7 H22 V23 H2 Z" fill="#fff"/><path d="M8 7 V5 A4 4 0 0 1 16 5 V7" stroke="#fff" stroke-width="1.5" fill="none"/><rect x="7" y="10" width="4.5" height="4.5" fill="#f25022"/><rect x="12.5" y="10" width="4.5" height="4.5" fill="#7fba00"/><rect x="7" y="15.5" width="4.5" height="4.5" fill="#00a4ef"/><rect x="12.5" y="15.5" width="4.5" height="4.5" fill="#ffb900"/></svg>
<svg class="r" style="left:553px;top:736px;" width="24" height="24" viewBox="0 0 24 24"><path d="M21.5 13.5 H6.5 C7 18 12 20 17 18.5 C19 18 20.5 17 21.5 16 V21 C18 23 13 23.5 9 21.5 C3 18.5 1.5 11 5 6 C8 1.5 15 0.5 19 4 C21.5 6.5 22 10 21.5 13.5 Z M7 10.5 H16 C16 6.5 13 4.5 10.5 5.5 C8.5 6.5 7.5 8.5 7 10.5 Z" fill="#1277d6"/></svg>
<svg class="r" style="left:601px;top:737px;" width="24" height="22" viewBox="0 0 24 22"><path d="M1 2 H9 L11 4 H23 V20 H1 Z" fill="#e8b84a"/><path d="M1 7 H23 V20 H1 Z" fill="#f7d66a"/><rect x="7" y="12" width="10" height="8" fill="#2d89d6"/><rect x="9" y="14" width="6" height="4" fill="#8fd1f7"/></svg>
<svg class="r" style="left:651px;top:737px;" width="22" height="22" viewBox="0 0 22 22"><path d="M1 1 H21 V13 L13 21 H1 Z" fill="#fce100"/><path d="M13 21 V13 H21 Z" fill="#1f1f1f"/></svg>
<svg class="r" style="left:699px;top:735px;" width="26" height="24" viewBox="0 0 26 24"><path d="M6 3 L21 1 L24 21 L9 23 Z" fill="#cfe6f0" stroke="#7ea9c0"/><path d="M2 6 L17 4 L20 23 L5 24 Z" fill="#e9f3f7" stroke="#8db4c8"/><path d="M6 4 L14 2" stroke="#4a7ea8" stroke-width="2"/></svg>
<div class="r" style="left:737px;top:728px;width:48px;height:40px;background:#47484b;"></div>
<svg class="r" style="left:733px;top:726px;" width="40" height="40" viewBox="0 0 40 40"><g transform="scale(1.2)"><path d="M27 7 L32 9 V25 L27 27 Z M12 22.2 L27 23.6 L27 27 Z" fill="#865fc5"/><path d="M13.8 12.6 L17.6 15.4 L13.8 18.4 Z M23.8 10.6 V20.2 L17.6 15.4 Z" fill="none" stroke="#865fc5" stroke-width="1.6" stroke-linejoin="round"/></g></svg>
<svg class="r" style="left:846px;top:735px;" width="26" height="26" viewBox="0 0 26 26"><ellipse cx="12" cy="14" rx="11" ry="9" fill="#e9dcc5"/><circle cx="7" cy="11" r="2" fill="#e53935"/><circle cx="11" cy="8" r="2" fill="#43a047"/><circle cx="6" cy="16" r="2" fill="#1e88e5"/><circle cx="13" cy="19" r="2" fill="#fdd835"/><path d="M14 15 L24 2" stroke="#b5651d" stroke-width="2.2"/><path d="M13 16 L15 13" stroke="#555" stroke-width="2.5"/></svg>
<div class="r" style="left:545px;top:766px;width:40px;height:2px;background:#76b9ed;"></div>
<div class="r" style="left:594px;top:766px;width:40px;height:2px;background:#76b9ed;"></div>
<div class="r" style="left:643px;top:766px;width:40px;height:2px;background:#76b9ed;"></div>
<div class="r" style="left:692px;top:766px;width:40px;height:2px;background:#76b9ed;"></div>
<div class="r" style="left:737px;top:766px;width:48px;height:2px;background:#76b9ed;"></div>
<div class="r" style="left:790px;top:766px;width:40px;height:2px;background:#76b9ed;"></div>
<div class="r" style="left:839px;top:766px;width:40px;height:2px;background:#76b9ed;"></div>
<svg class="r" style="left:1140px;top:740px;" width="15" height="17" viewBox="0 0 15 17"><circle cx="10" cy="4" r="3" fill="none" stroke="#fff" stroke-width="1.2"/><path d="M5 10 C6 7 13 7 14 11" stroke="#fff" stroke-width="1.2" fill="none"/><circle cx="5" cy="9" r="3" fill="none" stroke="#fff" stroke-width="1.2"/><path d="M0.5 16 C1 12 9 12 9.5 16" stroke="#fff" stroke-width="1.2" fill="none"/></svg>
<svg class="r" style="left:1176px;top:743px;" width="14" height="9" viewBox="0 0 14 9"><path d="M1 8 L7 1.5 L13 8" stroke="#fff" stroke-width="1.3" fill="none"/></svg>
<svg class="r" style="left:1198px;top:741px;" width="18" height="15" viewBox="0 0 18 15"><path d="M1 5 H4 L9 1 V14 L4 10 H1 Z" fill="none" stroke="#fff" stroke-width="1.1"/><path d="M11.5 4.5 C13 6 13 9 11.5 10.5 M14 2.5 C16.5 5 16.5 10 14 12.5" stroke="#fff" stroke-width="1.1" fill="none"/></svg>
<svg class="r" style="left:1225px;top:741px;" width="16" height="15" viewBox="0 0 16 15"><path d="M1 13 C3 7 8 4 14 4 M3.5 13.5 C5 9 9 7 14 7 M6.5 14 C7.5 11.5 10 10 14 10" stroke="#fff" stroke-width="1.3" fill="none"/><circle cx="12.5" cy="13" r="1.6" fill="#fff"/></svg>
<div class="t" style="left:1256px;top:733px;color:#ffffff;font-size:12px;font-family:'Liberation Sans';">7:38 AM</div>
<div class="t" style="left:1249px;top:751px;color:#ffffff;font-size:12px;font-family:'Liberation Sans';letter-spacing:-0.339px;">07-05-2019</div>
<svg class="r" style="left:1322px;top:736px;" width="30" height="30" viewBox="0 0 30 30"><path d="M3 5 H23 V18 H12 L8 22 V18 H3 Z" fill="#fff"/><path d="M6 9 H20 M6 12 H20 M6 15 H16" stroke="#1f2226" stroke-width="1.2"/><circle cx="19" cy="20" r="7.5" fill="#1f2226" stroke="#a8a8a8" stroke-width="1.3"/><text x="19" y="24.5" font-size="12" fill="#fff" text-anchor="middle" font-family="Liberation Sans">1</text></svg>
<div class="r" style="left:1361px;top:728px;width:1px;height:40px;background:#5a5c60;"></div></body></html>
